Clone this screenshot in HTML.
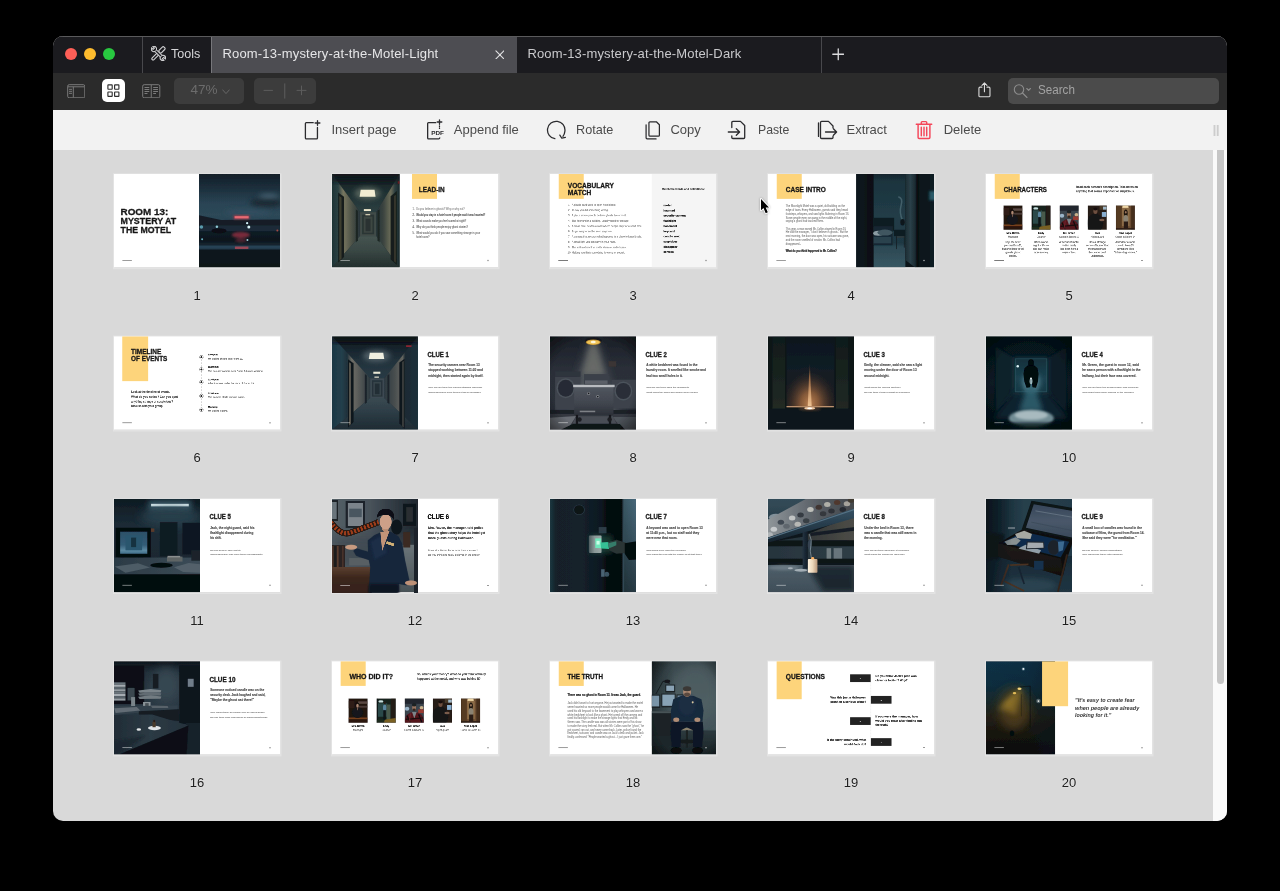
<!DOCTYPE html>
<html><head><meta charset="utf-8">
<style>
*{box-sizing:border-box;margin:0;padding:0}
html,body{width:1280px;height:891px;background:#000;overflow:hidden;font-family:"Liberation Sans",sans-serif}
#win{position:absolute;will-change:transform;left:53px;top:36px;width:1174px;height:784.7px;border-radius:10px;overflow:hidden;background:#d9d9d9}
#title{position:absolute;left:0;top:0;width:100%;height:37px;background:#1b1b1f;border-top:1px solid #5a5a5c}
#tool{position:absolute;left:0;top:36.5px;width:100%;height:37.2px;background:#2b2b2b}
#act{position:absolute;left:0;top:73.7px;width:100%;height:40.6px;background:#f2f2f2}
.abs{position:absolute}
.tl{position:absolute;top:12px;width:12px;height:12px;border-radius:50%}
.ttxt{position:absolute;top:10px;font-size:13px;line-height:16px;color:#d6d6d8;white-space:nowrap;transform-origin:0 50%}
.atxt{position:absolute;top:85.5px;font-size:13px;line-height:16px;color:#4b4b4b;white-space:nowrap;transform-origin:0 50%}
.lbl{position:absolute;width:60px;text-align:center;font-size:13px;line-height:16px;color:#202020;text-shadow:0 0 1.5px rgba(255,255,255,.7)}
.thumb{position:absolute;will-change:transform;overflow:hidden}
.slide{position:absolute;left:0;top:0;width:664px;height:373.6px;transform:scale(.25);transform-origin:0 0;color:#1a1a1a;font-family:"Liberation Sans",sans-serif}
.slide .img{position:absolute;top:0;height:373.6px;overflow:hidden}
.slide .img svg{display:block;width:100%;height:100%}
.yb{position:absolute;background:#fdd47c}
.h{position:absolute;font-weight:bold;white-space:nowrap;transform-origin:0 0;color:#151515;letter-spacing:.5px}
.t{position:absolute;white-space:nowrap;transform-origin:0 0}
.ft{position:absolute;left:34px;top:343px;font-size:6px;font-weight:bold;white-space:nowrap}
.pn{position:absolute;left:616px;top:342px;font-size:6px;white-space:nowrap;color:#444}
</style></head><body>
<div id="win">
 <div id="title"></div>
 <div id="tool"></div>
 <div id="act"></div>
  <!-- title bar -->
 <div class="tl" style="left:12px;background:#fe5f57"></div>
 <div class="tl" style="left:31px;background:#febc2e"></div>
 <div class="tl" style="left:49.8px;background:#28c840"></div>
 <div class="abs" style="left:89px;top:1px;width:1px;height:36px;background:#48484c"></div>
 <svg class="abs" style="left:98.3px;top:10.1px" width="14.800" height="14.800" viewBox="0 0 28 28" fill="#1b1b1f" stroke="#d2d2d4" stroke-width="2.100" stroke-linejoin="round" stroke-linecap="round">
  <g transform="rotate(-45 14 14)"><rect x="-2.500" y="11.700" width="16" height="4.600" rx="2.300"/><rect x="17" y="10.800" width="13" height="6.400" rx="2.400"/></g>
  <g transform="rotate(45 14 14)"><rect x="5" y="12" width="18" height="4"/><circle cx="2" cy="14" r="5"/><circle cx="26" cy="14" r="5"/><rect x="-5" y="12.300" width="6.500" height="3.400" stroke="none"/><rect x="26.500" y="12.300" width="6.500" height="3.400" stroke="none"/><path d="M-2.600 12.200 H1.600 V15.800 H-2.600 M30.600 12.200 H26.400 V15.800 H30.600" fill="none"/><rect x="6.500" y="13.100" width="15" height="1.800" stroke="none"/></g>
 </svg>
 <div class="ttxt" id="tx_tools" style="left:117.6px;transform:scaleX(.965)">Tools</div>
 <div class="abs" style="left:158px;top:1px;width:305.5px;height:36px;background:#4d4d52;border-left:1px solid #77777b"></div>
 <div class="ttxt" id="tx_tab1" style="left:169.4px;letter-spacing:.19px;color:#e6e6e8">Room-13-mystery-at-the-Motel-Light</div>
 <svg class="abs" style="left:441.700px;top:13.600px" width="9.800" height="9.800" viewBox="0 0 10.500 10.500" stroke="#e0e0e2" stroke-width="1.200" stroke-linecap="round"><path d="M1 1 L9.500 9.500 M9.500 1 L1 9.500"/></svg>
 <div class="ttxt" id="tx_tab2" style="left:474.4px;letter-spacing:.16px;color:#c9c9cc">Room-13-mystery-at-the-Motel-Dark</div>
 <div class="abs" style="left:768px;top:1px;width:1px;height:36px;background:#48484c"></div>
 <svg class="abs" style="left:778.5px;top:12.1px" width="12.500" height="12.500" viewBox="0 0 12.500 12.500" stroke="#dcdcde" stroke-width="1.300" stroke-linecap="round"><path d="M6.250 .8 V11.700 M.8 6.250 H11.700"/></svg>

 <!-- toolbar -->
 <svg class="abs" style="left:13.5px;top:47.6px" width="18.500" height="14.500" viewBox="0 0 18.500 14.500" fill="none" stroke="#7b7b7b" stroke-width="1"><rect x=".7" y=".7" width="17.100" height="13.100" rx="1.500"/><path d="M1 2.800 H17.500 M6.300 2.800 V13.500 M2 5.300 H5 M2 7.300 H5 M2 9.300 H5" /></svg>
 <div class="abs" style="left:48.8px;top:43.2px;width:23.200px;height:23.300px;border-radius:5px;background:#fff"></div>
 <svg class="abs" style="left:54.2px;top:48.200px" width="13" height="13.500" viewBox="0 0 13 13.500" fill="none" stroke="#2e2e2e" stroke-width="1.150"><rect x=".9" y=".9" width="4.300" height="4.300" rx=".4"/><rect x="7.600" y=".9" width="4.300" height="4.300" rx=".4"/><rect x=".9" y="8" width="4.300" height="4.300" rx=".4"/><rect x="7.600" y="8" width="4.300" height="4.300" rx=".4"/></svg>
 <svg class="abs" style="left:89.3px;top:47.6px" width="18.500" height="14.500" viewBox="0 0 18.500 14.500" fill="none" stroke="#7b7b7b" stroke-width="1"><rect x=".7" y=".7" width="17.100" height="13.100" rx="1.500"/><path d="M9.250 1 V13.500 M2.500 3.500 H7.300 M2.500 5.500 H7.300 M2.500 7.500 H7.300 M2.500 9.500 H5.500 M11.200 3.500 H16 M11.200 5.500 H16 M11.200 7.500 H16 M11.200 9.500 H14"/></svg>
 <div class="abs" style="left:121px;top:41.700px;width:69.800px;height:26.300px;border-radius:5px;background:#3c3c3c"></div>
 <div class="abs" id="tx_zoom" style="left:137.500px;top:46.300px;font-size:13.500px;line-height:16px;color:#6c6c6c;white-space:nowrap;transform-origin:0 50%">47%</div>
 <svg class="abs" style="left:169px;top:52.800px" width="8" height="6" viewBox="0 0 8 6" fill="none" stroke="#676767" stroke-width="1" stroke-linecap="round" stroke-linejoin="round"><path d="M.7 .9 L4 4.600 L7.300 .9"/></svg>
 <div class="abs" style="left:201.300px;top:41.700px;width:61.300px;height:26.300px;border-radius:5px;background:#3c3c3c"></div>
 <svg class="abs" style="left:208px;top:45px" width="50" height="20" viewBox="0 0 50 20" fill="none" stroke="#5c5c5c" stroke-width="1" stroke-linecap="round"><path d="M3 9.400 H11.500 M23.750 2.800 V17.200 M36 9.400 H45 M40.500 5 V13.800"/></svg>
 <svg class="abs" style="left:925.400px;top:46.300px" width="12.900" height="15.700" viewBox="0 0 14 17" fill="none" stroke="#dcdcdc" stroke-width="1.200" stroke-linecap="round" stroke-linejoin="round"><path d="M4.200 5.600 H2.200 Q1 5.600 1 6.800 V14.800 Q1 16 2.200 16 H11.800 Q13 16 13 14.800 V6.800 Q13 5.600 11.800 5.600 H9.800 M7 10.500 V1.200 M4.300 3.600 L7 1 L9.700 3.600"/></svg>
 <div class="abs" style="left:954.700px;top:41.700px;width:211.800px;height:26.300px;border-radius:5px;background:#4b4b4b"></div>
 <svg class="abs" style="left:960px;top:47px" width="20" height="16" viewBox="0 0 20 16" fill="none" stroke="#8c8c8c" stroke-width="1.100" stroke-linecap="round" stroke-linejoin="round"><circle cx="6" cy="6.500" r="4.700"/><path d="M9.500 10 L14 14.500 M13.800 5.500 L15.600 7.300 L17.400 5.500"/></svg>
 <div class="abs" id="tx_search" style="left:985px;top:46.200px;transform:scaleX(.97);font-size:12px;line-height:16px;color:#a3a3a3;white-space:nowrap;transform-origin:0 50%">Search</div>
 <!-- action bar -->

 <svg class="abs" style="left:250px;top:83px" width="20" height="22" viewBox="0 0 20 22" fill="none" stroke="#2b2b2e" stroke-width="1.300" stroke-linecap="round" stroke-linejoin="round"><path d="M10.200 3.650 H3.300 Q2.400 3.650 2.400 4.550 V18.950 Q2.400 19.850 3.300 19.850 H13.550 Q14.450 19.850 14.450 18.950 V8.400 M12.100 4 H16.900 M14.500 1.700 V6.300"/></svg>
 <div class="atxt" id="tx_a1" style="left:278.500px">Insert page</div>
 <svg class="abs" style="left:372px;top:83px" width="22" height="22" viewBox="0 0 22 22" fill="none" stroke="#2b2b2e" stroke-width="1.300" stroke-linecap="round" stroke-linejoin="round"><path d="M10.700 3.650 H3.550 Q2.650 3.650 2.650 4.550 V18.950 Q2.650 19.850 3.550 19.850 H13.700 Q14.600 19.850 14.750 19 M12.200 3 H16.800 M14.500 .8 V5.300 M14.500 7 V7.400 M14.500 9 V9.400"/><text x="6.300" y="16.200" font-family="Liberation Sans" font-weight="bold" font-size="6.200" fill="#2b2b2e" stroke="none" textLength="12.700" lengthAdjust="spacingAndGlyphs">PDF</text></svg>
 <div class="atxt" id="tx_a2" style="left:400.800px">Append file</div>
 <svg class="abs" style="left:492.400px;top:82.800px" width="23.300" height="23.300" viewBox="0 0 24 24" fill="none" stroke="#2b2b2e" stroke-width="1.300" stroke-linecap="round" stroke-linejoin="round"><path d="M10.200 20.300 A9 9 0 1 1 20.500 12.500 Q20.300 15.500 18.500 17.800 M15.300 16.600 L17.300 19.800 L21 19"/></svg>
 <div class="atxt" id="tx_a3" style="transform:scaleX(.974);left:523.400px">Rotate</div>
 <svg class="abs" style="left:590.500px;top:83.700px" width="19" height="20.900" viewBox="0 0 20 22" fill="none" stroke="#2b2b2e" stroke-width="1.300" stroke-linecap="round" stroke-linejoin="round"><path d="M6.300 1.900 H13 L16.200 5 V16 Q16.200 17.100 15.100 17.100 H6.300 Q5.200 17.100 5.200 16 V3 Q5.200 1.900 6.300 1.900 Z M2.200 5 V18.800 Q2.200 19.900 3.300 19.900 H12.700"/></svg>
 <div class="atxt" id="tx_a4" style="left:617.400px">Copy</div>
 <svg class="abs" style="left:673px;top:83px" width="22" height="22" viewBox="0 0 22 22" fill="none" stroke="#2b2b2e" stroke-width="1.300" stroke-linecap="round" stroke-linejoin="round"><path d="M5.800 8.500 V3.500 Q5.800 2.400 6.900 2.400 H14.500 L18.700 6.500 V18.400 Q18.700 19.500 17.600 19.500 H6.900 Q5.800 19.500 5.800 18.400 V17 M2.300 13 H13.500 M10.300 9.800 L13.600 13 L10.300 16.200"/></svg>
 <div class="atxt" id="tx_a5" style="transform:scaleX(.943);left:704.500px">Paste</div>
 <svg class="abs" style="left:763px;top:83px" width="24" height="22" viewBox="0 0 24 22" fill="none" stroke="#2b2b2e" stroke-width="1.300" stroke-linecap="round" stroke-linejoin="round"><path d="M2.500 4 V17.400 M17 8.800 V7 L12.500 2.400 H5.600 Q4.500 2.400 4.500 3.500 V18.400 Q4.500 19.500 5.600 19.500 H15.900 Q17 19.500 17 18.400 V17.200 M9.500 13 H20.300 M17.400 9.800 L20.600 13 L17.400 16.200"/></svg>
 <div class="atxt" id="tx_a6" style="left:793.500px">Extract</div>
 <svg class="abs" style="left:861px;top:83px" width="20" height="22" viewBox="0 0 20 22" fill="none" stroke="#f4465a" stroke-width="1.450" stroke-linecap="round" stroke-linejoin="round"><path d="M2.300 5.300 H17.700 M7.300 5 V3.400 Q7.300 2.600 8.100 2.600 H11.900 Q12.700 2.600 12.700 3.400 V5 M4.100 5.500 V18.500 Q4.100 19.500 5.100 19.500 H14.900 Q15.900 19.500 15.900 18.500 V5.500 M7.300 8.200 V16.800 M10 8.200 V16.800 M12.700 8.200 V16.800"/></svg>
 <div class="atxt" id="tx_a7" style="left:890.700px">Delete</div>
 <svg class="abs" style="left:1158.500px;top:88px" width="9" height="14" viewBox="0 0 9 14" stroke="#cdcdcd" stroke-width="1.900" fill="none"><path d="M2.500 1 V12 M5.700 1 V12"/></svg>
 <!-- scrollbar -->
 <div class="abs" style="left:1159.800px;top:114.300px;width:15px;height:672px;background:#fafafa"></div>
 <div class="abs" style="left:1164.200px;top:114.300px;width:6.900px;height:533.500px;border-radius:0 0 3.500px 3.500px;background:#c6c6c6"></div>

 <svg width="0" height="0" style="position:absolute"><defs>
<filter id="bg1" x="0" y="0" width="100%" height="100%"><feGaussianBlur stdDeviation="1.3" edgeMode="duplicate"/></filter>
<filter id="b1" x="-20%" y="-20%" width="140%" height="140%"><feGaussianBlur stdDeviation="1.2"/></filter>
<filter id="b2" x="-20%" y="-20%" width="140%" height="140%"><feGaussianBlur stdDeviation="2.5"/></filter>
<filter id="b4" x="-30%" y="-30%" width="160%" height="160%"><feGaussianBlur stdDeviation="5"/></filter>
<filter id="b8" x="-40%" y="-40%" width="180%" height="180%"><feGaussianBlur stdDeviation="10"/></filter>
<filter id="b16" x="-60%" y="-60%" width="220%" height="220%"><feGaussianBlur stdDeviation="20"/></filter>
<linearGradient id="g1" x1="0" y1="0" x2="0" y2="1" gradientUnits="objectBoundingBox"><stop offset="0" stop-color="#131f29"/><stop offset="0.3" stop-color="#1c2f3c"/><stop offset="0.6" stop-color="#294353"/><stop offset="0.85" stop-color="#2d4858"/><stop offset="1" stop-color="#2a4454"/></linearGradient><linearGradient id="g2" x1="0" y1="0" x2="0" y2="1" gradientUnits="objectBoundingBox"><stop offset="0" stop-color="#101c24"/><stop offset="0.25" stop-color="#0c161d"/><stop offset="0.36" stop-color="#15242f"/><stop offset="0.42" stop-color="#294659"/><stop offset="0.47" stop-color="#213a4b"/><stop offset="0.52" stop-color="#0d171e"/><stop offset="1" stop-color="#0a1218"/></linearGradient><linearGradient id="g3" x1="0" y1="0" x2="0" y2="1" gradientUnits="objectBoundingBox"><stop offset="0" stop-color="#131e1f"/><stop offset="0.45" stop-color="#1e2f31"/><stop offset="1" stop-color="#2c3f41"/></linearGradient><linearGradient id="g4" x1="0" y1="0" x2="1" y2="0" gradientUnits="objectBoundingBox"><stop offset="0" stop-color="#1d3335"/><stop offset="0.22" stop-color="#2a4042"/><stop offset="0.4" stop-color="#77765f"/><stop offset="0.75" stop-color="#474d44"/><stop offset="1" stop-color="#28343a"/></linearGradient><linearGradient id="g5" x1="0" y1="0" x2="1" y2="0" gradientUnits="objectBoundingBox"><stop offset="0" stop-color="#27333a"/><stop offset="0.3" stop-color="#3a433f"/><stop offset="0.62" stop-color="#6b6c58"/><stop offset="0.8" stop-color="#2b3d3e"/><stop offset="1" stop-color="#1a2a2b"/></linearGradient><linearGradient id="g6" x1="0" y1="0" x2="0" y2="1" gradientUnits="objectBoundingBox"><stop offset="0" stop-color="#465451"/><stop offset="0.5" stop-color="#384643"/><stop offset="1" stop-color="#222e2d"/></linearGradient><linearGradient id="g7" x1="0" y1="0" x2="1" y2="0" gradientUnits="objectBoundingBox"><stop offset="0" stop-color="#0d191f"/><stop offset="0.45" stop-color="#0b151a"/><stop offset="0.8" stop-color="#070d11"/><stop offset="1" stop-color="#0a1318"/></linearGradient><linearGradient id="g8" x1="0" y1="0" x2="0" y2="1" gradientUnits="objectBoundingBox"><stop offset="0" stop-color="#13262e"/><stop offset="0.08" stop-color="#1c343e"/><stop offset="0.45" stop-color="#213c47"/><stop offset="0.74" stop-color="#1f3843"/><stop offset="0.78" stop-color="#2c4853"/><stop offset="1" stop-color="#385762"/></linearGradient><linearGradient id="g9" x1="0" y1="0" x2="1" y2="0" gradientUnits="objectBoundingBox"><stop offset="0" stop-color="#1c2d34"/><stop offset="0.45" stop-color="#2b4049"/><stop offset="0.8" stop-color="#1d2e35"/><stop offset="1" stop-color="#131f25"/></linearGradient><linearGradient id="g10" x1="0" y1="0" x2="1" y2="0" gradientUnits="objectBoundingBox"><stop offset="0" stop-color="#0b1519"/><stop offset="0.6" stop-color="#0c181d"/><stop offset="1" stop-color="#0d1c25"/></linearGradient><linearGradient id="g11" x1="0" y1="0" x2="0" y2="1" gradientUnits="objectBoundingBox"><stop offset="0" stop-color="#0d161c"/><stop offset="0.3" stop-color="#17242d"/><stop offset="0.6" stop-color="#22323c"/><stop offset="1" stop-color="#283a45"/></linearGradient><linearGradient id="g12" x1="0" y1="0" x2="1" y2="0" gradientUnits="objectBoundingBox"><stop offset="0" stop-color="#1d3743"/><stop offset="0.25" stop-color="#223f4c"/><stop offset="0.4" stop-color="#1f313b"/><stop offset="0.52" stop-color="#6e6d66"/><stop offset="0.8" stop-color="#4a4f50"/><stop offset="1" stop-color="#2b373f"/></linearGradient><linearGradient id="g13" x1="0" y1="0" x2="1" y2="0" gradientUnits="objectBoundingBox"><stop offset="0" stop-color="#2c3840"/><stop offset="0.3" stop-color="#474d4e"/><stop offset="0.54" stop-color="#65655f"/><stop offset="0.62" stop-color="#1c2a33"/><stop offset="1" stop-color="#1e303a"/></linearGradient><linearGradient id="g14" x1="0" y1="0" x2="0" y2="1" gradientUnits="objectBoundingBox"><stop offset="0" stop-color="#3a4a52"/><stop offset="0.4" stop-color="#2e3e47"/><stop offset="1" stop-color="#1e2b33"/></linearGradient><linearGradient id="g15" x1="0" y1="0" x2="0" y2="1" gradientUnits="objectBoundingBox"><stop offset="0" stop-color="#1a1f27"/><stop offset="0.35" stop-color="#2a2f38"/><stop offset="0.8" stop-color="#2b3039"/><stop offset="1" stop-color="#22262d"/></linearGradient><linearGradient id="g16" x1="0" y1="0" x2="0" y2="1" gradientUnits="objectBoundingBox"><stop offset="0" stop-color="#353941"/><stop offset="1" stop-color="#2c3037"/></linearGradient><linearGradient id="g17" x1="0" y1="0" x2="0" y2="1" gradientUnits="objectBoundingBox"><stop offset="0" stop-color="#51565f"/><stop offset="0.6" stop-color="#40454e"/><stop offset="1" stop-color="#2c3038"/></linearGradient><radialGradient id="g18" cx="0.5" cy="0.5" r="0.75" gradientUnits="objectBoundingBox"><stop offset="0" stop-color="#000" stop-opacity="0"/><stop offset="0.65" stop-color="#000" stop-opacity="0"/><stop offset="1" stop-color="#000" stop-opacity="0.6"/></radialGradient><linearGradient id="g19" x1="0" y1="0" x2="0" y2="1" gradientUnits="objectBoundingBox"><stop offset="0" stop-color="#101b1d"/><stop offset="0.5" stop-color="#18231f"/><stop offset="1" stop-color="#232a24"/></linearGradient><linearGradient id="g20" x1="0" y1="0" x2="0" y2="1" gradientUnits="objectBoundingBox"><stop offset="0" stop-color="#0f1a1c"/><stop offset="0.5" stop-color="#18231f"/><stop offset="1" stop-color="#222923"/></linearGradient><linearGradient id="g21" x1="0" y1="0" x2="0" y2="1" gradientUnits="objectBoundingBox"><stop offset="0" stop-color="#0c161e"/><stop offset="0.45" stop-color="#111c25"/><stop offset="1" stop-color="#1f1d1d"/></linearGradient><radialGradient id="g22" cx="0.5" cy="0.5" r="0.5" gradientUnits="objectBoundingBox"><stop offset="0" stop-color="#c48654" stop-opacity="0.95"/><stop offset="0.3" stop-color="#9c663e" stop-opacity="0.8"/><stop offset="0.6" stop-color="#5e4030" stop-opacity="0.5"/><stop offset="0.85" stop-color="#2a2424" stop-opacity="0.2"/><stop offset="1" stop-color="#1a1a1c" stop-opacity="0"/></radialGradient><linearGradient id="g23" x1="0" y1="0" x2="0" y2="1" gradientUnits="objectBoundingBox"><stop offset="0" stop-color="#a87044" stop-opacity="0.0"/><stop offset="0.3" stop-color="#b87c4c" stop-opacity="0.7"/><stop offset="1" stop-color="#f0c494" stop-opacity="1"/></linearGradient><linearGradient id="g24" x1="0" y1="0" x2="0" y2="1" gradientUnits="objectBoundingBox"><stop offset="0" stop-color="#0d171c"/><stop offset="0.1" stop-color="#0b151b"/><stop offset="1" stop-color="#0c1820"/></linearGradient><linearGradient id="g25" x1="0" y1="0" x2="0" y2="1" gradientUnits="objectBoundingBox"><stop offset="0" stop-color="#061219"/><stop offset="0.5" stop-color="#081a23"/><stop offset="1" stop-color="#050e14"/></linearGradient><linearGradient id="g26" x1="0" y1="0" x2="0" y2="1" gradientUnits="objectBoundingBox"><stop offset="0" stop-color="#12303b"/><stop offset="0.6" stop-color="#1b4250"/><stop offset="1" stop-color="#163844"/></linearGradient><radialGradient id="g27" cx="0.5" cy="0.55" r="0.75" gradientUnits="objectBoundingBox"><stop offset="0" stop-color="#000" stop-opacity="0"/><stop offset="0.6" stop-color="#000" stop-opacity="0"/><stop offset="1" stop-color="#000" stop-opacity="0.6"/></radialGradient><linearGradient id="g28" x1="0" y1="0" x2="0" y2="1" gradientUnits="objectBoundingBox"><stop offset="0" stop-color="#0e1a22"/><stop offset="0.3" stop-color="#1c2c37"/><stop offset="0.62" stop-color="#1a2832"/><stop offset="1" stop-color="#0c141a"/></linearGradient><linearGradient id="g29" x1="0" y1="0" x2="0" y2="1" gradientUnits="objectBoundingBox"><stop offset="0" stop-color="#2c5068"/><stop offset="0.6" stop-color="#335c76"/><stop offset="0.85" stop-color="#5c8aa2"/><stop offset="1" stop-color="#3f6e88"/></linearGradient><linearGradient id="g30" x1="0" y1="0" x2="1" y2="0" gradientUnits="objectBoundingBox"><stop offset="0" stop-color="#2b3a45"/><stop offset="1" stop-color="#3c4c57"/></linearGradient><linearGradient id="g31" x1="0" y1="0" x2="1" y2="0" gradientUnits="objectBoundingBox"><stop offset="0" stop-color="#545f66"/><stop offset="0.45" stop-color="#48525a"/><stop offset="0.75" stop-color="#2f3840"/><stop offset="1" stop-color="#20282f"/></linearGradient><linearGradient id="g32" x1="0" y1="0" x2="0" y2="1" gradientUnits="objectBoundingBox"><stop offset="0" stop-color="#6b7579"/><stop offset="1" stop-color="#4a5358"/></linearGradient><linearGradient id="g33" x1="0" y1="0" x2="0" y2="1" gradientUnits="objectBoundingBox"><stop offset="0" stop-color="#5c4031"/><stop offset="0.12" stop-color="#3b261d"/><stop offset="1" stop-color="#21161a"/></linearGradient><linearGradient id="g34" x1="0" y1="0" x2="1" y2="0" gradientUnits="objectBoundingBox"><stop offset="0" stop-color="#1c3640"/><stop offset="0.07" stop-color="#132029"/><stop offset="0.3" stop-color="#101c25"/><stop offset="0.6" stop-color="#0e1820"/><stop offset="0.66" stop-color="#05090d"/><stop offset="0.83" stop-color="#04070a"/><stop offset="0.86" stop-color="#3a5864"/><stop offset="1" stop-color="#48687a"/></linearGradient><linearGradient id="g35" x1="0" y1="0" x2="0" y2="1" gradientUnits="objectBoundingBox"><stop offset="0" stop-color="#000" stop-opacity="0"/><stop offset="1" stop-color="#000" stop-opacity="0.45"/></linearGradient><linearGradient id="g36" x1="0" y1="0" x2="1" y2="0" gradientUnits="objectBoundingBox"><stop offset="0" stop-color="#15232d" stop-opacity="0"/><stop offset="0.5" stop-color="#15232d" stop-opacity="0.8"/><stop offset="1" stop-color="#15232d" stop-opacity="0"/></linearGradient><linearGradient id="g37" x1="0" y1="0" x2="1" y2="0" gradientUnits="objectBoundingBox"><stop offset="0" stop-color="#4f5e60"/><stop offset="0.45" stop-color="#8a9898"/><stop offset="1" stop-color="#9aa8a6"/></linearGradient><linearGradient id="g38" x1="0" y1="0" x2="0" y2="1" gradientUnits="objectBoundingBox"><stop offset="0" stop-color="#3b5563"/><stop offset="1" stop-color="#2d4452"/></linearGradient><linearGradient id="g39" x1="0" y1="0" x2="1" y2="0" gradientUnits="objectBoundingBox"><stop offset="0" stop-color="#3a3d3e"/><stop offset="1" stop-color="#57564f"/></linearGradient><linearGradient id="g40" x1="0" y1="0" x2="1" y2="0" gradientUnits="objectBoundingBox"><stop offset="0" stop-color="#2c3a44"/><stop offset="1" stop-color="#34434d"/></linearGradient><linearGradient id="g41" x1="0" y1="0" x2="0" y2="1" gradientUnits="objectBoundingBox"><stop offset="0" stop-color="#0b1217"/><stop offset="1" stop-color="#131c22"/></linearGradient><linearGradient id="g42" x1="0" y1="0" x2="0" y2="1" gradientUnits="objectBoundingBox"><stop offset="0" stop-color="#5a6b77"/><stop offset="0.3" stop-color="#465662"/><stop offset="0.7" stop-color="#27333c"/><stop offset="1" stop-color="#161f26"/></linearGradient><linearGradient id="g43" x1="0" y1="0" x2="1" y2="0" gradientUnits="objectBoundingBox"><stop offset="0" stop-color="#a4aaae"/><stop offset="0.3" stop-color="#80878e"/><stop offset="0.6" stop-color="#62676e"/><stop offset="1" stop-color="#4c4f54"/></linearGradient><linearGradient id="g44" x1="0" y1="0" x2="0" y2="1" gradientUnits="objectBoundingBox"><stop offset="0" stop-color="#3f5d71"/><stop offset="0.5" stop-color="#2b4254"/><stop offset="1" stop-color="#16242f"/></linearGradient><linearGradient id="g45" x1="0" y1="0" x2="1" y2="0" gradientUnits="objectBoundingBox"><stop offset="0" stop-color="#27394a"/><stop offset="1" stop-color="#131e28"/></linearGradient><linearGradient id="g46" x1="0" y1="0" x2="1" y2="0" gradientUnits="objectBoundingBox"><stop offset="0" stop-color="#fff3e0"/><stop offset="0.5" stop-color="#ecd7ba"/><stop offset="1" stop-color="#b9977a"/></linearGradient><linearGradient id="g47" x1="0" y1="0" x2="1" y2="0" gradientUnits="objectBoundingBox"><stop offset="0" stop-color="#10242f"/><stop offset="0.45" stop-color="#2f4c5b"/><stop offset="1" stop-color="#2c4656"/></linearGradient><linearGradient id="g48" x1="0" y1="0" x2="0" y2="1" gradientUnits="objectBoundingBox"><stop offset="0" stop-color="#1d323f"/><stop offset="0.5" stop-color="#2a4252"/><stop offset="1" stop-color="#1c2f3b"/></linearGradient><linearGradient id="g49" x1="0" y1="0" x2="0" y2="1" gradientUnits="objectBoundingBox"><stop offset="0" stop-color="#43536a"/><stop offset="0.5" stop-color="#5b6b80"/><stop offset="1" stop-color="#48586c"/></linearGradient><linearGradient id="g50" x1="0" y1="0" x2="0" y2="1" gradientUnits="objectBoundingBox"><stop offset="0" stop-color="#2a201a"/><stop offset="1" stop-color="#14100e"/></linearGradient><linearGradient id="g51" x1="0" y1="0" x2="1" y2="0" gradientUnits="objectBoundingBox"><stop offset="0" stop-color="#06121a" stop-opacity="0.75"/><stop offset="0.3" stop-color="#06121a" stop-opacity="0"/></linearGradient><linearGradient id="g52" x1="0" y1="0" x2="0" y2="1" gradientUnits="objectBoundingBox"><stop offset="0" stop-color="#0c141b"/><stop offset="0.12" stop-color="#222f39"/><stop offset="0.5" stop-color="#2b3944"/><stop offset="1" stop-color="#182129"/></linearGradient><linearGradient id="g53" x1="0" y1="0" x2="1" y2="0" gradientUnits="objectBoundingBox"><stop offset="0" stop-color="#202c36"/><stop offset="0.5" stop-color="#2c3a44"/><stop offset="1" stop-color="#25323c"/></linearGradient><linearGradient id="g54" x1="0" y1="0" x2="0" y2="1" gradientUnits="objectBoundingBox"><stop offset="0" stop-color="#38464b"/><stop offset="0.45" stop-color="#485a5f"/><stop offset="0.73" stop-color="#44555a"/><stop offset="0.75" stop-color="#2c393d"/><stop offset="1" stop-color="#1a2427"/></linearGradient><linearGradient id="g55" x1="0" y1="0" x2="1" y2="0" gradientUnits="objectBoundingBox"><stop offset="0" stop-color="#10181b" stop-opacity="0.6"/><stop offset="0.35" stop-color="#10181b" stop-opacity="0"/></linearGradient><radialGradient id="g56" cx="0.55" cy="0.5" r="0.8" gradientUnits="objectBoundingBox"><stop offset="0" stop-color="#000" stop-opacity="0"/><stop offset="0.65" stop-color="#000" stop-opacity="0"/><stop offset="1" stop-color="#000" stop-opacity="0.5"/></radialGradient><linearGradient id="g57" x1="0" y1="0" x2="0" y2="1" gradientUnits="objectBoundingBox"><stop offset="0" stop-color="#0b3147"/><stop offset="0.25" stop-color="#0d2d3e"/><stop offset="0.42" stop-color="#17292c"/><stop offset="0.6" stop-color="#231f15"/><stop offset="0.8" stop-color="#15130e"/><stop offset="1" stop-color="#090b0c"/></linearGradient><linearGradient id="g58" x1="0" y1="0" x2="1" y2="0" gradientUnits="objectBoundingBox"><stop offset="0" stop-color="#03141e" stop-opacity="0"/><stop offset="0.6" stop-color="#03141e" stop-opacity="0.1"/><stop offset="1" stop-color="#03141e" stop-opacity="0.5"/></linearGradient></defs></svg>
<svg class="thumb" style="left:59px;top:136px" width="170" height="99" viewBox="-8 -8.00 680 396" font-family="Liberation Sans"><rect x="-1" y="0" width="668" height="378" fill="none" stroke="#fff" stroke-width="6" opacity=".26" filter="url(#b1)"/><svg x="0" y="0" width="664" height="373.6" viewBox="0 0 664 373.6" overflow="hidden"><rect width="664" height="373.6" fill="#fff"/><svg x="340" y="0" width="324" height="373.6" viewBox="0 0 324 373.6" overflow="hidden"><rect width="324" height="373.6" fill="#0a1218"/><g filter="url(#bg1)"><rect x="0.0" y="0.0" width="324.0" height="190.0" fill="url(#g1)" /><g filter="url(#b8)" ><ellipse cx="268.5" cy="114.5" rx="66.0" ry="20.0" fill="#1a2a36" /><ellipse cx="279.7" cy="86.4" rx="40.0" ry="5.0" fill="#58788a" /><ellipse cx="195.3" cy="152.8" rx="90.0" ry="12.0" fill="#325060" /></g><polygon points="-0.4,165.2 88.5,183.7 324.7,182.0 324.7,237.2 -0.4,237.2" fill="#121e28" /><g filter="url(#b2)" ><rect x="-0.4" y="206.2" width="324.0" height="22.0" fill="#1a2c38" /></g><rect x="0.0" y="231.0" width="324.0" height="143.0" fill="url(#g2)" /><g filter="url(#b4)" ><ellipse cx="167.2" cy="243.9" rx="36.0" ry="12.0" fill="#8a3040" opacity=".85"/><ellipse cx="167.2" cy="265.3" rx="24.0" ry="8.0" fill="#5a2432" opacity=".8"/></g><g filter="url(#b2)" ><rect x="143.6" y="290.1" width="54.0" height="10.0" fill="#c04a58" opacity=".75"/></g><g filter="url(#b4)" ><rect x="139.1" y="165.2" width="62.0" height="16.0" fill="#c03848" opacity=".8"/></g><g filter="url(#b1)" ><rect x="142.5" y="168.5" width="56.0" height="9.0" fill="#f07078" opacity=".9"/></g><g filter="url(#b2)" ><ellipse cx="192.5" cy="196.7" rx="4.5" ry="4.5" fill="#cfeef5" /><ellipse cx="199.3" cy="211.9" rx="6.0" ry="6.0" fill="#d8f4f8" /><ellipse cx="71.6" cy="210.7" rx="5.0" ry="5.0" fill="#8ec8d4" /><ellipse cx="9.7" cy="211.9" rx="7.0" ry="7.0" fill="#5a9aac" /><ellipse cx="12.5" cy="260.8" rx="4.0" ry="4.0" fill="#6ab0c0" /><ellipse cx="193.7" cy="263.6" rx="4.0" ry="4.0" fill="#9fd0da" /><ellipse cx="313.5" cy="225.9" rx="4.0" ry="4.0" fill="#a04a40" /></g><g filter="url(#b2)" ><ellipse cx="80.0" cy="227.0" rx="30.0" ry="10.0" fill="#080e13" /></g></g></svg><text stroke="#161616" stroke-width="1.1" stroke-linejoin="round" x="26.2" y="163.0" font-size="36" font-weight="bold" fill="#161616" text-anchor="start" textLength="191.0" lengthAdjust="spacingAndGlyphs">ROOM 13:</text><text stroke="#161616" stroke-width="1.1" stroke-linejoin="round" x="26.2" y="199.5" font-size="36" font-weight="bold" fill="#161616" text-anchor="start" textLength="223.0" lengthAdjust="spacingAndGlyphs">MYSTERY AT</text><text stroke="#161616" stroke-width="1.1" stroke-linejoin="round" x="26.2" y="236.0" font-size="36" font-weight="bold" fill="#161616" text-anchor="start" textLength="202.5" lengthAdjust="spacingAndGlyphs">THE MOTEL</text><rect x="33.5" y="344.3" width="38" height="3" fill="#222" opacity=".6"/></svg></svg>
<div class="lbl" style="left:114px;top:251.9px">1</div>
<svg class="thumb" style="left:277px;top:136px" width="170" height="99" viewBox="-8 -8.00 680 396" font-family="Liberation Sans"><rect x="-1" y="0" width="668" height="378" fill="none" stroke="#fff" stroke-width="6" opacity=".26" filter="url(#b1)"/><svg x="0" y="0" width="664" height="373.6" viewBox="0 0 664 373.6" overflow="hidden"><rect width="664" height="373.6" fill="#fff"/><svg x="0" y="0" width="271" height="373.6" viewBox="0 0 271 373.6" overflow="hidden"><rect width="271" height="373.6" fill="#1f2c2c"/><g filter="url(#bg1)"><polygon points="0.0,0.0 271.0,0.0 176.4,152.8 112.3,152.8" fill="url(#g3)" /><polygon points="0.0,0.0 112.3,152.8 112.3,248.4 0.0,373.6" fill="url(#g4)" /><polygon points="271.0,0.0 176.4,152.8 176.4,248.4 271.0,373.6" fill="url(#g5)" /><polygon points="0.0,373.6 112.3,248.4 176.4,248.4 271.0,373.6" fill="url(#g6)" /><rect x="112.3" y="152.8" width="64.1" height="95.6" fill="#2f3a38" /><rect x="112.3" y="152.8" width="64.1" height="95.6" fill="#414c48" /><rect x="120.3" y="162.4" width="48.1" height="78.8" fill="#2c3634" /><rect x="127.3" y="170.8" width="34.1" height="64.1" fill="#3d4743" /><rect x="134.3" y="179.2" width="20.1" height="49.4" fill="#2a3331" /><polygon points="24.5,74.0 48.1,90.9 48.1,331.7 24.5,355.3" fill="#161f1d" /><polygon points="29.0,88.1 38.0,94.3 38.0,338.4 29.0,346.9" fill="#3e3d2f" /><polygon points="234.4,88.6 259.7,68.4 259.7,364.3 234.4,341.8" fill="#161f1d" /><polygon points="248.4,88.1 255.2,83.0 255.2,355.3 248.4,348.6" fill="#38382c" /><polygon points="95.4,141.5 103.8,147.2 103.8,265.3 95.4,273.7" fill="#1c2624" /><polygon points="182.0,147.2 190.5,141.5 190.5,273.7 182.0,265.3" fill="#1c2624" /><g filter="url(#b8)" ><rect x="0.0" y="0.0" width="271.0" height="30.0" fill="#0f191a" /></g><g filter="url(#b8)" ><ellipse cx="142.4" cy="76.8" rx="52.0" ry="24.0" fill="#8f9a88" opacity=".5"/></g><polygon points="114.6,62.8 170.2,62.8 174.2,90.9 110.6,90.9" fill="#f2ecd2" /><rect x="127.5" y="140.4" width="28.1" height="7.9" fill="#efe8cc" /><rect x="133.7" y="160.1" width="19.1" height="5.1" fill="#cfc9b0" /><rect x="263.0" y="29.0" width="8.0" height="10.0" fill="#6a1a22" /></g></svg><rect x="320" y="0" width="100" height="99.5" fill="#fdd47b"/><text stroke="#161616" stroke-width="1.1" stroke-linejoin="round" x="347.0" y="71.2" font-size="28" font-weight="bold" fill="#161616" text-anchor="start" textLength="104.0" lengthAdjust="spacingAndGlyphs">LEAD-IN</text><text x="321.5" y="144.8" font-size="10.6" font-weight="normal" fill="#222" text-anchor="start" opacity="0.55" stroke="#222" stroke-width="0.26">1.</text><text x="336.7" y="144.8" font-size="10.6" font-weight="normal" fill="#222" text-anchor="start" textLength="194.0" lengthAdjust="spacingAndGlyphs" opacity="0.55" stroke="#222" stroke-width="0.26">Do you believe in ghosts? Why or why not?</text><text x="321.5" y="168.8" font-size="10.6" font-weight="normal" fill="#222" text-anchor="start" opacity="0.95" stroke="#222" stroke-width="0.26">2.</text><text x="336.7" y="168.8" font-size="10.6" font-weight="normal" fill="#222" text-anchor="start" textLength="276.0" lengthAdjust="spacingAndGlyphs" opacity="0.95" stroke="#222" stroke-width="0.26">Would you stay in a hotel room if people said it was haunted?</text><text x="321.5" y="191.8" font-size="10.6" font-weight="normal" fill="#222" text-anchor="start" opacity="0.75" stroke="#222" stroke-width="0.26">3.</text><text x="336.7" y="191.8" font-size="10.6" font-weight="normal" fill="#222" text-anchor="start" textLength="200.0" lengthAdjust="spacingAndGlyphs" opacity="0.75" stroke="#222" stroke-width="0.26">What sounds make you feel scared at night?</text><text x="321.5" y="216.3" font-size="10.6" font-weight="normal" fill="#222" text-anchor="start" opacity="0.75" stroke="#222" stroke-width="0.26">4.</text><text x="336.7" y="216.3" font-size="10.6" font-weight="normal" fill="#222" text-anchor="start" textLength="207.0" lengthAdjust="spacingAndGlyphs" opacity="0.75" stroke="#222" stroke-width="0.26">Why do you think people enjoy ghost stories?</text><text x="321.5" y="239.4" font-size="10.6" font-weight="normal" fill="#222" text-anchor="start" opacity="0.7" stroke="#222" stroke-width="0.26">5.</text><text x="336.7" y="239.4" font-size="10.6" font-weight="normal" fill="#222" text-anchor="start" textLength="256.0" lengthAdjust="spacingAndGlyphs" opacity="0.7" stroke="#222" stroke-width="0.26">What would you do if you saw something strange in your</text><text x="336.7" y="254.6" font-size="10.6" font-weight="normal" fill="#222" text-anchor="start" textLength="53.0" lengthAdjust="spacingAndGlyphs" opacity="0.7" stroke="#222" stroke-width="0.26">hotel room?</text><rect x="33.5" y="344.3" width="38" height="3" fill="#fff" opacity=".6"/><rect x="621" y="343.5" width="6" height="5" fill="#555" opacity=".6"/></svg></svg>
<div class="lbl" style="left:332px;top:251.9px">2</div>
<svg class="thumb" style="left:495px;top:136px" width="170" height="99" viewBox="-8 -8.00 680 396" font-family="Liberation Sans"><rect x="-1" y="0" width="668" height="378" fill="none" stroke="#fff" stroke-width="6" opacity=".26" filter="url(#b1)"/><svg x="0" y="0" width="664" height="373.6" viewBox="0 0 664 373.6" overflow="hidden"><rect width="664" height="373.6" fill="#fff"/><rect x="407" y="0" width="257" height="373.6" fill="#f5f5f5"/><rect x="35" y="0" width="100" height="99.5" fill="#fdd47b"/><text stroke="#161616" stroke-width="1.1" stroke-linejoin="round" x="71.2" y="57.1" font-size="27.5" font-weight="bold" fill="#161616" text-anchor="start" textLength="184.0" lengthAdjust="spacingAndGlyphs">VOCABULARY</text><text stroke="#161616" stroke-width="1.1" stroke-linejoin="round" x="71.2" y="84.1" font-size="27.5" font-weight="bold" fill="#161616" text-anchor="start" textLength="94.0" lengthAdjust="spacingAndGlyphs">MATCH</text><text x="72.3" y="126.9" font-size="11.2" font-weight="normal" fill="#333" text-anchor="start" opacity="0.6" stroke="#333" stroke-width="0.38">1.</text><text x="87.0" y="126.9" font-size="11.2" font-weight="normal" fill="#333" text-anchor="start" textLength="178.0" lengthAdjust="spacingAndGlyphs" opacity="0.62" stroke="#333" stroke-width="0.38">A plastic card used to open hotel doors.</text><text x="72.3" y="148.1" font-size="11.2" font-weight="normal" fill="#333" text-anchor="start" opacity="0.6" stroke="#333" stroke-width="0.38">2.</text><text x="87.0" y="148.1" font-size="11.2" font-weight="normal" fill="#333" text-anchor="start" textLength="147.0" lengthAdjust="spacingAndGlyphs" opacity="0.62" stroke="#333" stroke-width="0.38">To say you did something wrong.</text><text x="72.3" y="169.3" font-size="11.2" font-weight="normal" fill="#333" text-anchor="start" opacity="0.6" stroke="#333" stroke-width="0.38">3.</text><text x="87.0" y="169.3" font-size="11.2" font-weight="normal" fill="#333" text-anchor="start" textLength="219.0" lengthAdjust="spacingAndGlyphs" opacity="0.62" stroke="#333" stroke-width="0.38">A place where people believe ghosts live or visit.</text><text x="72.3" y="190.5" font-size="11.2" font-weight="normal" fill="#333" text-anchor="start" opacity="0.6" stroke="#333" stroke-width="0.38">4.</text><text x="87.0" y="190.5" font-size="11.2" font-weight="normal" fill="#333" text-anchor="start" textLength="230.0" lengthAdjust="spacingAndGlyphs" opacity="0.62" stroke="#333" stroke-width="0.38">The floor under a building, usually used for storage.</text><text x="72.3" y="211.7" font-size="11.2" font-weight="normal" fill="#333" text-anchor="start" opacity="0.6" stroke="#333" stroke-width="0.38">5.</text><text x="87.0" y="211.7" font-size="11.2" font-weight="normal" fill="#333" text-anchor="start" textLength="282.0" lengthAdjust="spacingAndGlyphs" opacity="0.62" stroke="#333" stroke-width="0.38">A small hotel next to a road where people stay for a short time.</text><text x="72.3" y="232.9" font-size="11.2" font-weight="normal" fill="#333" text-anchor="start" opacity="0.6" stroke="#333" stroke-width="0.38">6.</text><text x="87.0" y="232.9" font-size="11.2" font-weight="normal" fill="#333" text-anchor="start" textLength="163.0" lengthAdjust="spacingAndGlyphs" opacity="0.62" stroke="#333" stroke-width="0.38">To go away or not be seen anymore.</text><text x="72.3" y="254.1" font-size="11.2" font-weight="normal" fill="#333" text-anchor="start" opacity="0.6" stroke="#333" stroke-width="0.38">7.</text><text x="87.0" y="254.1" font-size="11.2" font-weight="normal" fill="#333" text-anchor="start" textLength="281.0" lengthAdjust="spacingAndGlyphs" opacity="0.62" stroke="#333" stroke-width="0.38">A camera that records what happens in a place to keep it safe.</text><text x="72.3" y="275.3" font-size="11.2" font-weight="normal" fill="#333" text-anchor="start" opacity="0.6" stroke="#333" stroke-width="0.38">8.</text><text x="87.0" y="275.3" font-size="11.2" font-weight="normal" fill="#333" text-anchor="start" textLength="177.0" lengthAdjust="spacingAndGlyphs" opacity="0.62" stroke="#333" stroke-width="0.38">A small light you can carry in your hand.</text><text x="72.3" y="296.5" font-size="11.2" font-weight="normal" fill="#333" text-anchor="start" opacity="0.6" stroke="#333" stroke-width="0.38">9.</text><text x="87.0" y="296.5" font-size="11.2" font-weight="normal" fill="#333" text-anchor="start" textLength="219.0" lengthAdjust="spacingAndGlyphs" opacity="0.62" stroke="#333" stroke-width="0.38">The soft material that melts when a candle burns.</text><text x="70.0" y="317.7" font-size="11.2" font-weight="normal" fill="#333" text-anchor="start" opacity="0.6" stroke="#333" stroke-width="0.38">10.</text><text x="87.0" y="317.7" font-size="11.2" font-weight="normal" fill="#333" text-anchor="start" textLength="212.0" lengthAdjust="spacingAndGlyphs" opacity="0.62" stroke="#333" stroke-width="0.38">Making you think something is wrong or secret.</text><text x="447.0" y="63.9" font-size="11.2" font-weight="bold" fill="#222" text-anchor="start" textLength="171.6" lengthAdjust="spacingAndGlyphs" opacity="0.85" stroke="#222" stroke-width="0.5">Match the words and definitions:</text><text x="453.8" y="129.0" font-size="10.4" font-weight="bold" fill="#1a1a1a" text-anchor="start" textLength="32.0" lengthAdjust="spacingAndGlyphs" stroke="#1a1a1a" stroke-width="0.5">motel</text><text x="453.8" y="149.7" font-size="10.4" font-weight="bold" fill="#1a1a1a" text-anchor="start" textLength="46.0" lengthAdjust="spacingAndGlyphs" stroke="#1a1a1a" stroke-width="0.5">haunted</text><text x="453.8" y="170.4" font-size="10.4" font-weight="bold" fill="#1a1a1a" text-anchor="start" textLength="89.0" lengthAdjust="spacingAndGlyphs" stroke="#1a1a1a" stroke-width="0.5">security camera</text><text x="453.8" y="191.1" font-size="10.4" font-weight="bold" fill="#1a1a1a" text-anchor="start" textLength="50.6" lengthAdjust="spacingAndGlyphs" stroke="#1a1a1a" stroke-width="0.5">flashlight</text><text x="453.8" y="211.8" font-size="10.4" font-weight="bold" fill="#1a1a1a" text-anchor="start" textLength="54.6" lengthAdjust="spacingAndGlyphs" stroke="#1a1a1a" stroke-width="0.5">basement</text><text x="453.8" y="232.5" font-size="10.4" font-weight="bold" fill="#1a1a1a" text-anchor="start" textLength="45.0" lengthAdjust="spacingAndGlyphs" stroke="#1a1a1a" stroke-width="0.5">keycard</text><text x="453.8" y="253.2" font-size="10.4" font-weight="bold" fill="#1a1a1a" text-anchor="start" textLength="64.7" lengthAdjust="spacingAndGlyphs" stroke="#1a1a1a" stroke-width="0.5">candle wax</text><text x="453.8" y="273.9" font-size="10.4" font-weight="bold" fill="#1a1a1a" text-anchor="start" textLength="56.0" lengthAdjust="spacingAndGlyphs" stroke="#1a1a1a" stroke-width="0.5">suspicious</text><text x="453.8" y="294.6" font-size="10.4" font-weight="bold" fill="#1a1a1a" text-anchor="start" textLength="56.0" lengthAdjust="spacingAndGlyphs" stroke="#1a1a1a" stroke-width="0.5">disappear</text><text x="453.8" y="315.3" font-size="10.4" font-weight="bold" fill="#1a1a1a" text-anchor="start" textLength="41.0" lengthAdjust="spacingAndGlyphs" stroke="#1a1a1a" stroke-width="0.5">confess</text><rect x="33.5" y="344.3" width="38" height="3" fill="#222" opacity=".6"/><rect x="621" y="343.5" width="6" height="5" fill="#555" opacity=".6"/></svg></svg>
<div class="lbl" style="left:550px;top:251.9px">3</div>
<svg class="thumb" style="left:713px;top:136px" width="170" height="99" viewBox="-8 -8.00 680 396" font-family="Liberation Sans"><rect x="-1" y="0" width="668" height="378" fill="none" stroke="#fff" stroke-width="6" opacity=".26" filter="url(#b1)"/><svg x="0" y="0" width="664" height="373.6" viewBox="0 0 664 373.6" overflow="hidden"><rect width="664" height="373.6" fill="#fff"/><svg x="352.5" y="0" width="311.5" height="373.6" viewBox="0 0 311.5 373.6" overflow="hidden"><rect width="311.5" height="373.6" fill="#0c1519"/><g filter="url(#bg1)"><rect x="0.0" y="0.0" width="70.3" height="373.6" fill="url(#g7)" /><rect x="70.3" y="0.0" width="126.6" height="373.6" fill="url(#g8)" /><rect x="70.3" y="175.3" width="81.6" height="51.8" fill="#0e1b22" /><g filter="url(#b1)" ><rect x="70.3" y="209.0" width="76.0" height="76.0" fill="#172830" /></g><g filter="url(#b2)" ><ellipse cx="88.3" cy="237.2" rx="20.0" ry="10.0" fill="#8c9ca3" /></g><g filter="url(#b2)" ><ellipse cx="115.3" cy="234.4" rx="30.0" ry="12.0" fill="#3f5660" /></g><g filter="url(#b2)" ><rect x="70.3" y="251.2" width="70.0" height="26.0" fill="#2a434d" /></g><rect x="151.9" y="223.1" width="45.0" height="25.3" fill="#101b21" /><rect x="160.3" y="248.4" width="33.8" height="6.8" fill="#2f3a3e" /><rect x="160.3" y="248.4" width="3.0" height="52.0" fill="#141c20" /><rect x="191.1" y="248.4" width="3.0" height="46.0" fill="#141c20" /><g filter="url(#b2)" ><path d="M185.7 186.5 Q171.6 152.8 180.0 124.7 T168.8 90.9" fill="none" stroke="#5f7d88" stroke-width="6" opacity=".55"/></g><g filter="url(#b1)" ><ellipse cx="185.7" cy="193.3" rx="9.0" ry="13.0" fill="#0d181d" /></g><polygon points="196.9,0.0 241.9,0.0 241.9,373.6 235.9,373.6 196.9,344.1" fill="url(#g9)" /><rect x="241.9" y="0.0" width="8.4" height="373.6" fill="#070d10" /><rect x="250.4" y="0.0" width="61.1" height="373.6" fill="url(#g10)" /><g filter="url(#b4)" ><rect x="292.6" y="68.4" width="32.5" height="36.6" fill="#2a5a68" /></g></g></svg><rect x="35" y="0" width="100" height="99.5" fill="#fdd47b"/><text stroke="#161616" stroke-width="1.1" stroke-linejoin="round" x="71.2" y="71.2" font-size="28" font-weight="bold" fill="#161616" text-anchor="start" textLength="160.3" lengthAdjust="spacingAndGlyphs">CASE INTRO</text><text x="71.2" y="133.6" font-size="10.6" font-weight="normal" fill="#222" text-anchor="start" textLength="237.0" lengthAdjust="spacingAndGlyphs" opacity="0.62" stroke="#222" stroke-width="0.2">The Moonlight Motel was a quiet, old building on the</text><text x="71.2" y="148.5" font-size="10.6" font-weight="normal" fill="#222" text-anchor="start" textLength="249.0" lengthAdjust="spacingAndGlyphs" opacity="0.62" stroke="#222" stroke-width="0.2">edge of town. Every Halloween, guests said they heard</text><text x="71.2" y="163.4" font-size="10.6" font-weight="normal" fill="#222" text-anchor="start" textLength="253.0" lengthAdjust="spacingAndGlyphs" opacity="0.62" stroke="#222" stroke-width="0.2">footsteps, whispers, and saw lights flickering in Room 13.</text><text x="71.2" y="178.3" font-size="10.6" font-weight="normal" fill="#222" text-anchor="start" textLength="245.0" lengthAdjust="spacingAndGlyphs" opacity="0.62" stroke="#222" stroke-width="0.2">Some people even ran away in the middle of the night,</text><text x="71.2" y="193.2" font-size="10.6" font-weight="normal" fill="#222" text-anchor="start" textLength="152.0" lengthAdjust="spacingAndGlyphs" opacity="0.62" stroke="#222" stroke-width="0.2">saying a ghost had touched them.</text><text x="71.2" y="222.0" font-size="10.6" font-weight="normal" fill="#222" text-anchor="start" textLength="242.0" lengthAdjust="spacingAndGlyphs" opacity="0.62" stroke="#222" stroke-width="0.2">This year, a man named Mr. Collins stayed in Room 13.</text><text x="71.2" y="237.0" font-size="10.6" font-weight="normal" fill="#222" text-anchor="start" textLength="249.0" lengthAdjust="spacingAndGlyphs" opacity="0.62" stroke="#222" stroke-width="0.2">He told the manager, "I don't believe in ghosts." But the</text><text x="71.2" y="252.0" font-size="10.6" font-weight="normal" fill="#222" text-anchor="start" textLength="252.0" lengthAdjust="spacingAndGlyphs" opacity="0.62" stroke="#222" stroke-width="0.2">next morning, the door was open, his suitcase was gone,</text><text x="71.2" y="267.0" font-size="10.6" font-weight="normal" fill="#222" text-anchor="start" textLength="216.6" lengthAdjust="spacingAndGlyphs" opacity="0.62" stroke="#222" stroke-width="0.2">and the room smelled of smoke. Mr. Collins had</text><text x="71.2" y="282.0" font-size="10.6" font-weight="normal" fill="#222" text-anchor="start" textLength="62.0" lengthAdjust="spacingAndGlyphs" opacity="0.62" stroke="#222" stroke-width="0.2">disappeared...</text><text x="71.2" y="312.1" font-size="11.0" font-weight="bold" fill="#111" text-anchor="start" textLength="204.0" lengthAdjust="spacingAndGlyphs" stroke="#111" stroke-width="0.5">What do you think happened to Mr. Collins?</text><rect x="33.5" y="344.3" width="38" height="3" fill="#222" opacity=".6"/><rect x="621" y="343.5" width="6" height="5" fill="#fff" opacity=".6"/></svg></svg>
<div class="lbl" style="left:768px;top:251.9px">4</div>
<svg class="thumb" style="left:931px;top:136px" width="170" height="99" viewBox="-8 -8.00 680 396" font-family="Liberation Sans"><rect x="-1" y="0" width="668" height="378" fill="none" stroke="#fff" stroke-width="6" opacity=".26" filter="url(#b1)"/><svg x="0" y="0" width="664" height="373.6" viewBox="0 0 664 373.6" overflow="hidden"><rect width="664" height="373.6" fill="#fff"/><rect x="35" y="0" width="100" height="99.5" fill="#fdd47b"/><text stroke="#161616" stroke-width="1.1" stroke-linejoin="round" x="71.2" y="71.2" font-size="28" font-weight="bold" fill="#161616" text-anchor="start" textLength="172.7" lengthAdjust="spacingAndGlyphs">CHARACTERS</text><text x="359.8" y="55.8" font-size="12.4" font-weight="bold" fill="#222" text-anchor="start" textLength="247.5" lengthAdjust="spacingAndGlyphs" opacity="0.8" stroke="#222" stroke-width="0.5">Read each person's description. Take notes on</text><text x="359.8" y="73.2" font-size="12.4" font-weight="bold" fill="#222" text-anchor="start" textLength="234.6" lengthAdjust="spacingAndGlyphs" opacity="0.8" stroke="#222" stroke-width="0.5">anything that seems important or suspicious.</text><svg x="70.0" y="125.8" width="76" height="97.3" viewBox="0 0 76 97.3" overflow="hidden"><g filter="url(#b1)"><rect x="0.0" y="0.0" width="76.0" height="97.3" fill="#20130f" /><g filter="url(#b2)" ><rect x="38.0" y="11.7" width="38.0" height="9.7" fill="#5a4a42" /><rect x="38.0" y="29.2" width="38.0" height="7.8" fill="#4a3a34" /><rect x="0.0" y="9.7" width="22.8" height="29.2" fill="#2e1e18" /></g><rect x="0.0" y="79.8" width="76.0" height="17.5" fill="#2c140d" /><rect x="0.0" y="75.9" width="76.0" height="6.8" fill="#74401f" /><ellipse cx="35.7" cy="56.4" rx="22.8" ry="21.4" fill="#12141a" /><ellipse cx="35.0" cy="26.3" rx="7.6" ry="9.7" fill="#120d0b" /><ellipse cx="35.7" cy="29.2" rx="4.9" ry="7.8" fill="#b08a74" /><polygon points="33.4,38.9 38.8,38.9 36.1,48.6" fill="#9a7560" /></g><rect width="76" height="97.3" fill="none" stroke="#1a1210" stroke-width="2.5" opacity=".55"/></svg><text x="108.0" y="239.5" font-size="11.2" font-weight="bold" fill="#111" text-anchor="middle" textLength="52.0" lengthAdjust="spacingAndGlyphs" stroke="#111" stroke-width="0.5">Mrs. Raven</text><text x="108.0" y="255.3" font-size="11.2" font-weight="normal" fill="#333" text-anchor="middle" textLength="40.0" lengthAdjust="spacingAndGlyphs" opacity="0.7" stroke="#333" stroke-width="0.38">Manager</text><text x="108.0" y="275.5" font-size="11.2" font-weight="normal" fill="#222" text-anchor="middle" textLength="60.0" lengthAdjust="spacingAndGlyphs" opacity="0.8" stroke="#222" stroke-width="0.38">Says she never</text><text x="108.0" y="289.3" font-size="11.2" font-weight="normal" fill="#222" text-anchor="middle" textLength="70.0" lengthAdjust="spacingAndGlyphs" opacity="0.8" stroke="#222" stroke-width="0.38">goes near Room 13,</text><text x="108.0" y="303.1" font-size="11.2" font-weight="normal" fill="#222" text-anchor="middle" textLength="88.0" lengthAdjust="spacingAndGlyphs" opacity="0.8" stroke="#222" stroke-width="0.38">but she likes to tell</text><text x="108.0" y="316.9" font-size="11.2" font-weight="normal" fill="#222" text-anchor="middle" textLength="60.0" lengthAdjust="spacingAndGlyphs" opacity="0.8" stroke="#222" stroke-width="0.38">guests ghost</text><text x="108.0" y="330.7" font-size="11.2" font-weight="normal" fill="#222" text-anchor="middle" textLength="30.0" lengthAdjust="spacingAndGlyphs" opacity="0.8" stroke="#222" stroke-width="0.38">stories.</text><svg x="182.4" y="125.8" width="76" height="97.3" viewBox="0 0 76 97.3" overflow="hidden"><g filter="url(#b1)"><rect x="0.0" y="0.0" width="76.0" height="97.3" fill="#14231f" /><g filter="url(#b2)" ><ellipse cx="16.7" cy="11.7" rx="9.9" ry="4.9" fill="#c8e0e0" /><rect x="3.8" y="19.5" width="38.0" height="53.5" fill="#2b4a48" /><rect x="39.5" y="24.3" width="15.2" height="58.4" fill="#4a5a4c" /></g><rect x="57.8" y="0.0" width="18.2" height="97.3" fill="#241a12" /><rect x="0.0" y="0.0" width="4.6" height="97.3" fill="#0b1210" /><g filter="url(#b2)" ><polygon points="34.2,83.7 76.0,77.8 76.0,97.3 22.8,97.3" fill="#7a6124" /><rect x="0.0" y="85.6" width="30.4" height="11.7" fill="#1d2a1f" /></g><ellipse cx="31.9" cy="37.0" rx="6.8" ry="12.6" fill="#5b87a0" /><rect x="26.6" y="46.7" width="9.9" height="37.0" fill="#0e1418" /><ellipse cx="32.7" cy="18.5" rx="3.8" ry="5.8" fill="#2a1e18" /></g><rect width="76" height="97.3" fill="none" stroke="#1a1210" stroke-width="2.5" opacity=".55"/></svg><text x="220.4" y="239.5" font-size="11.2" font-weight="bold" fill="#111" text-anchor="middle" textLength="24.0" lengthAdjust="spacingAndGlyphs" stroke="#111" stroke-width="0.5">Emily</text><text x="220.4" y="255.3" font-size="11.2" font-weight="normal" fill="#333" text-anchor="middle" textLength="36.0" lengthAdjust="spacingAndGlyphs" opacity="0.7" stroke="#333" stroke-width="0.38">Cleaner</text><text x="220.4" y="275.5" font-size="11.2" font-weight="normal" fill="#222" text-anchor="middle" textLength="58.0" lengthAdjust="spacingAndGlyphs" opacity="0.8" stroke="#222" stroke-width="0.38">Often works</text><text x="220.4" y="289.3" font-size="11.2" font-weight="normal" fill="#222" text-anchor="middle" textLength="62.0" lengthAdjust="spacingAndGlyphs" opacity="0.8" stroke="#222" stroke-width="0.38">night shifts so</text><text x="220.4" y="303.1" font-size="11.2" font-weight="normal" fill="#222" text-anchor="middle" textLength="64.0" lengthAdjust="spacingAndGlyphs" opacity="0.8" stroke="#222" stroke-width="0.38">she can make</text><text x="220.4" y="316.9" font-size="11.2" font-weight="normal" fill="#222" text-anchor="middle" textLength="60.0" lengthAdjust="spacingAndGlyphs" opacity="0.8" stroke="#222" stroke-width="0.38">more money.</text><svg x="294.8" y="125.8" width="76" height="97.3" viewBox="0 0 76 97.3" overflow="hidden"><g filter="url(#b1)"><rect x="0.0" y="0.0" width="76.0" height="97.3" fill="#3b444e" /><g filter="url(#b2)" ><ellipse cx="9.1" cy="40.9" rx="9.1" ry="7.8" fill="#9ab4c8" /><ellipse cx="66.9" cy="37.0" rx="7.6" ry="6.8" fill="#c8b08a" /><rect x="0.0" y="0.0" width="76.0" height="21.4" fill="#20262e" /><rect x="53.2" y="43.8" width="22.8" height="14.6" fill="#9a3a30" /></g><ellipse cx="38.0" cy="87.6" rx="38.0" ry="33.1" fill="#55181f" /><polygon points="28.9,54.5 47.1,54.5 38.0,79.8" fill="#7d858a" /><g filter="url(#b1)" ><line x1="9.1" y1="68.1" x2="21.3" y2="97.3" stroke="#12090b" stroke-width="5" /><line x1="54.7" y1="63.2" x2="68.4" y2="97.3" stroke="#12090b" stroke-width="5" /><line x1="3.8" y1="83.7" x2="72.2" y2="77.8" stroke="#1a0c10" stroke-width="5" /><line x1="22.8" y1="60.3" x2="16.7" y2="97.3" stroke="#7a2a32" stroke-width="3" /></g><ellipse cx="37.2" cy="37.0" rx="7.6" ry="11.7" fill="#9a7560" /><ellipse cx="37.2" cy="25.3" rx="9.1" ry="6.8" fill="#1c2024" /><ellipse cx="37.2" cy="44.8" rx="6.1" ry="4.9" fill="#33251f" /></g><rect width="76" height="97.3" fill="none" stroke="#1a1210" stroke-width="2.5" opacity=".55"/></svg><text x="332.8" y="239.5" font-size="11.2" font-weight="bold" fill="#111" text-anchor="middle" textLength="48.0" lengthAdjust="spacingAndGlyphs" stroke="#111" stroke-width="0.5">Mr. Green</text><text x="332.8" y="255.3" font-size="11.2" font-weight="normal" fill="#333" text-anchor="middle" textLength="80.0" lengthAdjust="spacingAndGlyphs" opacity="0.7" stroke="#333" stroke-width="0.38">Guest in Room 12</text><text x="332.8" y="275.5" font-size="11.2" font-weight="normal" fill="#222" text-anchor="middle" textLength="80.0" lengthAdjust="spacingAndGlyphs" opacity="0.8" stroke="#222" stroke-width="0.38">A frequent motel</text><text x="332.8" y="289.3" font-size="11.2" font-weight="normal" fill="#222" text-anchor="middle" textLength="54.0" lengthAdjust="spacingAndGlyphs" opacity="0.8" stroke="#222" stroke-width="0.38">visitor, rarely</text><text x="332.8" y="303.1" font-size="11.2" font-weight="normal" fill="#222" text-anchor="middle" textLength="70.0" lengthAdjust="spacingAndGlyphs" opacity="0.8" stroke="#222" stroke-width="0.38">has been here a</text><text x="332.8" y="316.9" font-size="11.2" font-weight="normal" fill="#222" text-anchor="middle" textLength="54.0" lengthAdjust="spacingAndGlyphs" opacity="0.8" stroke="#222" stroke-width="0.38">couple of times.</text><svg x="407.2" y="125.8" width="76" height="97.3" viewBox="0 0 76 97.3" overflow="hidden"><g filter="url(#b1)"><rect x="0.0" y="0.0" width="76.0" height="97.3" fill="#251a14" /><g filter="url(#b2)" ><rect x="56.2" y="26.3" width="18.2" height="19.5" fill="#88aed0" /><rect x="47.1" y="0.0" width="28.9" height="17.5" fill="#4a3a2c" /><rect x="60.8" y="4.9" width="15.2" height="11.7" fill="#a0b8c8" /></g><ellipse cx="28.9" cy="72.0" rx="31.9" ry="38.9" fill="#121419" /><ellipse cx="30.4" cy="22.4" rx="8.4" ry="11.7" fill="#6e5040" /><ellipse cx="30.4" cy="14.6" rx="8.4" ry="5.8" fill="#140f0c" /><g filter="url(#b1)" ><ellipse cx="56.2" cy="58.4" rx="10.6" ry="4.9" fill="#7a5c4c" /></g></g><rect width="76" height="97.3" fill="none" stroke="#1a1210" stroke-width="2.5" opacity=".55"/></svg><text x="445.2" y="239.5" font-size="11.2" font-weight="bold" fill="#111" text-anchor="middle" textLength="20.0" lengthAdjust="spacingAndGlyphs" stroke="#111" stroke-width="0.5">Jack</text><text x="445.2" y="255.3" font-size="11.2" font-weight="normal" fill="#333" text-anchor="middle" textLength="54.0" lengthAdjust="spacingAndGlyphs" opacity="0.7" stroke="#333" stroke-width="0.38">Night guard</text><text x="445.2" y="275.5" font-size="11.2" font-weight="normal" fill="#222" text-anchor="middle" textLength="68.0" lengthAdjust="spacingAndGlyphs" opacity="0.8" stroke="#222" stroke-width="0.38">Has a strange</text><text x="445.2" y="289.3" font-size="11.2" font-weight="normal" fill="#222" text-anchor="middle" textLength="90.0" lengthAdjust="spacingAndGlyphs" opacity="0.8" stroke="#222" stroke-width="0.38">sense of humor that</text><text x="445.2" y="303.1" font-size="11.2" font-weight="normal" fill="#222" text-anchor="middle" textLength="72.0" lengthAdjust="spacingAndGlyphs" opacity="0.8" stroke="#222" stroke-width="0.38">the manager and</text><text x="445.2" y="316.9" font-size="11.2" font-weight="normal" fill="#222" text-anchor="middle" textLength="70.0" lengthAdjust="spacingAndGlyphs" opacity="0.8" stroke="#222" stroke-width="0.38">the cleaner don't</text><text x="445.2" y="330.7" font-size="11.2" font-weight="normal" fill="#222" text-anchor="middle" textLength="52.0" lengthAdjust="spacingAndGlyphs" opacity="0.8" stroke="#222" stroke-width="0.38">understand.</text><svg x="519.6" y="125.8" width="76" height="97.3" viewBox="0 0 76 97.3" overflow="hidden"><g filter="url(#b1)"><rect x="0.0" y="0.0" width="76.0" height="97.3" fill="#6a4c30" /><g filter="url(#b2)" ><ellipse cx="38.0" cy="9.7" rx="12.9" ry="13.6" fill="#f0d8a8" /><rect x="24.3" y="9.7" width="30.4" height="73.0" fill="#8c6c46" /></g><rect x="0.0" y="0.0" width="22.8" height="97.3" fill="#553a24" /><rect x="60.8" y="0.0" width="15.2" height="97.3" fill="#452e1c" /><ellipse cx="39.5" cy="31.1" rx="7.6" ry="14.6" fill="#1c1410" /><ellipse cx="39.5" cy="27.2" rx="3.4" ry="5.4" fill="#9a755c" /><ellipse cx="39.5" cy="53.5" rx="9.9" ry="15.6" fill="#8a8272" /><rect x="31.9" y="64.2" width="16.7" height="29.2" fill="#2a1e18" /><rect x="0.0" y="90.5" width="76.0" height="6.8" fill="#2e1e12" /></g><rect width="76" height="97.3" fill="none" stroke="#1a1210" stroke-width="2.5" opacity=".55"/></svg><text x="557.6" y="239.5" font-size="11.2" font-weight="bold" fill="#111" text-anchor="middle" textLength="54.0" lengthAdjust="spacingAndGlyphs" stroke="#111" stroke-width="0.5">Nina Lopez</text><text x="557.6" y="255.3" font-size="11.2" font-weight="normal" fill="#333" text-anchor="middle" textLength="80.0" lengthAdjust="spacingAndGlyphs" opacity="0.7" stroke="#333" stroke-width="0.38">Guest in Room 14</text><text x="557.6" y="275.5" font-size="11.2" font-weight="normal" fill="#222" text-anchor="middle" textLength="80.0" lengthAdjust="spacingAndGlyphs" opacity="0.8" stroke="#222" stroke-width="0.38">Asked for a room</text><text x="557.6" y="289.3" font-size="11.2" font-weight="normal" fill="#222" text-anchor="middle" textLength="70.0" lengthAdjust="spacingAndGlyphs" opacity="0.8" stroke="#222" stroke-width="0.38">close to Room 13,</text><text x="557.6" y="303.1" font-size="11.2" font-weight="normal" fill="#222" text-anchor="middle" textLength="68.0" lengthAdjust="spacingAndGlyphs" opacity="0.8" stroke="#222" stroke-width="0.38">saying she likes</text><text x="557.6" y="316.9" font-size="11.2" font-weight="normal" fill="#222" text-anchor="middle" textLength="90.0" lengthAdjust="spacingAndGlyphs" opacity="0.8" stroke="#222" stroke-width="0.38">"interesting stories."</text><rect x="33.5" y="344.3" width="38" height="3" fill="#222" opacity=".6"/><rect x="621" y="343.5" width="6" height="5" fill="#555" opacity=".6"/></svg></svg>
<div class="lbl" style="left:986px;top:251.9px">5</div>
<svg class="thumb" style="left:59px;top:298px" width="170" height="99" viewBox="-8 -9.20 680 396" font-family="Liberation Sans"><rect x="-1" y="0" width="668" height="378" fill="none" stroke="#fff" stroke-width="6" opacity=".26" filter="url(#b1)"/><svg x="0" y="0" width="664" height="373.6" viewBox="0 0 664 373.6" overflow="hidden"><rect width="664" height="373.6" fill="#fff"/><rect x="33" y="0" width="103.5" height="179.3" fill="#fdd47b"/><text stroke="#161616" stroke-width="1.1" stroke-linejoin="round" x="68.4" y="69.6" font-size="26" font-weight="bold" fill="#161616" text-anchor="start" textLength="121.0" lengthAdjust="spacingAndGlyphs">TIMELINE</text><text stroke="#161616" stroke-width="1.1" stroke-linejoin="round" x="68.4" y="97.7" font-size="26" font-weight="bold" fill="#161616" text-anchor="start" textLength="145.0" lengthAdjust="spacingAndGlyphs">OF EVENTS</text><text x="68.4" y="226.4" font-size="12.4" font-weight="bold" fill="#222" text-anchor="start" textLength="156.0" lengthAdjust="spacingAndGlyphs" opacity="0.8" stroke="#222" stroke-width="0.5">Look at the timeline of events.</text><text x="68.4" y="245.5" font-size="12.4" font-weight="bold" fill="#222" text-anchor="start" textLength="187.0" lengthAdjust="spacingAndGlyphs" opacity="0.8" stroke="#222" stroke-width="0.5">What do you notice? Can you spot</text><text x="68.4" y="264.6" font-size="12.4" font-weight="bold" fill="#222" text-anchor="start" textLength="167.6" lengthAdjust="spacingAndGlyphs" opacity="0.8" stroke="#222" stroke-width="0.5">anything strange or suspicious?</text><text x="68.4" y="283.2" font-size="12.4" font-weight="bold" fill="#222" text-anchor="start" textLength="129.0" lengthAdjust="spacingAndGlyphs" opacity="0.8" stroke="#222" stroke-width="0.5">Discuss with your group.</text><line x1="349.7" y1="84" x2="349.7" y2="293" stroke="#aaa" stroke-width="1" stroke-dasharray="3 3"/><circle cx="349.7" cy="83.7" r="8.3" fill="#fff"/><circle cx="349.7" cy="83.7" r="7.6" fill="none" stroke="#8a8a8a" stroke-width="1.8"/><circle cx="349.7" cy="83.7" r="4" fill="#222"/><text x="376.0" y="76.4" font-size="9.4" font-weight="bold" fill="#111" text-anchor="start" textLength="41.0" lengthAdjust="spacingAndGlyphs" stroke="#111" stroke-width="0.5">9:00 p.m.</text><text x="376.0" y="92.8" font-size="9.4" font-weight="normal" fill="#222" text-anchor="start" textLength="139.5" lengthAdjust="spacingAndGlyphs" opacity="0.7" stroke="#222" stroke-width="0.38">Mr. Collins checks into Room 13.</text><circle cx="349.7" cy="132.6" r="8.3" fill="#fff"/><circle cx="349.7" cy="132.6" r="7.6" fill="none" stroke="#8a8a8a" stroke-width="1.8"/><circle cx="349.7" cy="132.6" r="4" fill="#222"/><text x="376.0" y="125.4" font-size="9.4" font-weight="bold" fill="#111" text-anchor="start" textLength="45.0" lengthAdjust="spacingAndGlyphs" stroke="#111" stroke-width="0.5">11:20 p.m.</text><text x="376.0" y="142.4" font-size="9.4" font-weight="normal" fill="#222" text-anchor="start" textLength="221.0" lengthAdjust="spacingAndGlyphs" opacity="0.7" stroke="#222" stroke-width="0.38">The security camera near Room 13 stops working.</text><circle cx="349.7" cy="183.8" r="8.3" fill="#fff"/><circle cx="349.7" cy="183.8" r="7.6" fill="none" stroke="#8a8a8a" stroke-width="1.8"/><circle cx="349.7" cy="183.8" r="4" fill="#222"/><text x="376.0" y="176.1" font-size="9.4" font-weight="bold" fill="#111" text-anchor="start" textLength="45.0" lengthAdjust="spacingAndGlyphs" stroke="#111" stroke-width="0.5">11:45 p.m.</text><text x="376.0" y="191.4" font-size="9.4" font-weight="normal" fill="#222" text-anchor="start" textLength="186.0" lengthAdjust="spacingAndGlyphs" opacity="0.7" stroke="#222" stroke-width="0.38">A light moves under the door of Room 13.</text><circle cx="349.7" cy="239" r="8.3" fill="#fff"/><circle cx="349.7" cy="239" r="7.6" fill="none" stroke="#8a8a8a" stroke-width="1.8"/><circle cx="349.7" cy="239" r="4" fill="#222"/><text x="376.0" y="230.7" font-size="9.4" font-weight="bold" fill="#111" text-anchor="start" textLength="45.0" lengthAdjust="spacingAndGlyphs" stroke="#111" stroke-width="0.5">12:00 a.m.</text><text x="376.0" y="246.4" font-size="9.4" font-weight="normal" fill="#222" text-anchor="start" textLength="147.0" lengthAdjust="spacingAndGlyphs" opacity="0.7" stroke="#222" stroke-width="0.38">The camera starts working again.</text><circle cx="349.7" cy="293.5" r="8.3" fill="#fff"/><circle cx="349.7" cy="293.5" r="7.6" fill="none" stroke="#8a8a8a" stroke-width="1.8"/><circle cx="349.7" cy="293.5" r="4" fill="#222"/><text x="376.0" y="285.8" font-size="9.4" font-weight="bold" fill="#111" text-anchor="start" textLength="38.0" lengthAdjust="spacingAndGlyphs" stroke="#111" stroke-width="0.5">Morning</text><text x="376.0" y="301.4" font-size="9.4" font-weight="normal" fill="#222" text-anchor="start" textLength="80.5" lengthAdjust="spacingAndGlyphs" opacity="0.7" stroke="#222" stroke-width="0.38">Mr. Collins is gone.</text><rect x="33.5" y="344.3" width="38" height="3" fill="#222" opacity=".6"/><rect x="621" y="343.5" width="6" height="5" fill="#555" opacity=".6"/></svg></svg>
<div class="lbl" style="left:114px;top:414.2px">6</div>
<svg class="thumb" style="left:277px;top:298px" width="170" height="99" viewBox="-8 -9.20 680 396" font-family="Liberation Sans"><rect x="-1" y="0" width="668" height="378" fill="none" stroke="#fff" stroke-width="6" opacity=".26" filter="url(#b1)"/><svg x="0" y="0" width="664" height="373.6" viewBox="0 0 664 373.6" overflow="hidden"><rect width="664" height="373.6" fill="#fff"/><svg x="0" y="0" width="344" height="373.6" viewBox="0 0 344 373.6" overflow="hidden"><rect width="344" height="373.6" fill="#1a2a33"/><g filter="url(#bg1)"><polygon points="0.0,0.0 344.0,0.0 209.0,168.1 152.8,168.1" fill="url(#g11)" /><polygon points="0.0,0.0 152.8,168.1 152.8,246.8 0.0,373.6" fill="url(#g12)" /><polygon points="344.0,0.0 209.0,168.1 209.0,246.8 344.0,373.6" fill="url(#g13)" /><polygon points="0.0,373.6 152.8,246.8 209.0,246.8 344.0,373.6" fill="url(#g14)" /><rect x="152.8" y="168.1" width="56.3" height="78.8" fill="#2e3a42" /><rect x="152.8" y="168.1" width="56.3" height="78.8" fill="#3c4a52" /><rect x="159.8" y="175.8" width="42.3" height="65.5" fill="#27333a" /><rect x="165.8" y="182.4" width="30.3" height="54.1" fill="#38454c" /><rect x="171.8" y="189.0" width="18.3" height="42.7" fill="#242f36" /><polygon points="63.9,92.1 86.4,107.3 86.4,342.5 63.9,365.0" fill="#0f171d" /><polygon points="68.4,103.4 75.7,108.4 75.7,350.9 68.4,358.2" fill="#5c5a52" /><polygon points="269.2,105.0 290.6,89.3 290.6,370.6 269.2,348.1" fill="#0f171d" /><polygon points="281.1,102.8 286.7,98.9 286.7,365.0 281.1,359.3" fill="#4a4a45" /><polygon points="131.4,151.2 139.3,156.8 139.3,263.7 131.4,272.1" fill="#1a242b" /><polygon points="221.4,156.8 229.3,151.2 229.3,272.1 221.4,263.7" fill="#1a242b" /><g filter="url(#b8)" ><rect x="0.0" y="0.0" width="344.0" height="24.0" fill="#0a1116" /></g><g filter="url(#b8)" ><ellipse cx="178.1" cy="78.0" rx="55.0" ry="24.0" fill="#8a9aa0" opacity=".45"/></g><polygon points="151.2,65.7 205.0,65.7 209.0,90.4 147.2,90.4" fill="#efeee0" /><rect x="165.2" y="141.6" width="28.1" height="8.4" fill="#e8e6d4" /><rect x="169.7" y="160.7" width="18.0" height="5.6" fill="#c8c8ba" /><rect x="296.2" y="35.8" width="22.0" height="7.0" fill="#8a2530" /></g></svg><text stroke="#161616" stroke-width="1.1" stroke-linejoin="round" x="381.8" y="81.3" font-size="27.5" font-weight="bold" fill="#161616" text-anchor="start" textLength="86.0" lengthAdjust="spacingAndGlyphs">CLUE 1</text><text x="384.6" y="119.5" font-size="13.6" font-weight="bold" fill="#1d1d1d" text-anchor="start" textLength="206.0" lengthAdjust="spacingAndGlyphs" opacity="0.82" stroke="#1d1d1d" stroke-width="0.5">The security camera near Room 13</text><text x="384.6" y="140.3" font-size="13.6" font-weight="bold" fill="#1d1d1d" text-anchor="start" textLength="219.4" lengthAdjust="spacingAndGlyphs" opacity="0.82" stroke="#1d1d1d" stroke-width="0.5">stopped working between 11:20 and</text><text x="384.6" y="161.1" font-size="13.6" font-weight="bold" fill="#1d1d1d" text-anchor="start" textLength="221.0" lengthAdjust="spacingAndGlyphs" opacity="0.82" stroke="#1d1d1d" stroke-width="0.5">midnight, then started again by itself.</text><text x="384.6" y="208.7" font-size="9.4" font-weight="normal" fill="#222" text-anchor="start" textLength="216.6" lengthAdjust="spacingAndGlyphs" opacity="0.62" stroke="#222" stroke-width="0.28">Why do you think the camera stopped working?</text><text x="384.6" y="226.7" font-size="9.4" font-weight="normal" fill="#222" text-anchor="start" textLength="211.0" lengthAdjust="spacingAndGlyphs" opacity="0.62" stroke="#222" stroke-width="0.28">Could someone have turned it off on purpose?</text><rect x="33.5" y="344.3" width="38" height="3" fill="#fff" opacity=".6"/><rect x="621" y="343.5" width="6" height="5" fill="#555" opacity=".6"/></svg></svg>
<div class="lbl" style="left:332px;top:414.2px">7</div>
<svg class="thumb" style="left:495px;top:298px" width="170" height="99" viewBox="-8 -9.20 680 396" font-family="Liberation Sans"><rect x="-1" y="0" width="668" height="378" fill="none" stroke="#fff" stroke-width="6" opacity=".26" filter="url(#b1)"/><svg x="0" y="0" width="664" height="373.6" viewBox="0 0 664 373.6" overflow="hidden"><rect width="664" height="373.6" fill="#fff"/><svg x="0" y="0" width="344" height="373.6" viewBox="0 0 344 373.6" overflow="hidden"><rect width="344" height="373.6" fill="#2a2e36"/><g filter="url(#bg1)"><rect x="0.0" y="0.0" width="344.0" height="373.6" fill="url(#g15)" /><g filter="url(#b16)" ><polygon points="159.0,21.8 187.0,21.8 293.0,373.6 53.0,373.6" fill="#5d6168" opacity=".8"/></g><g filter="url(#b8)" ><polygon points="163.0,21.8 183.0,21.8 218.0,151.8 128.0,151.8" fill="#77776f" opacity=".55"/></g><g filter="url(#b2)" ><rect x="234.4" y="99.4" width="30.0" height="22.0" fill="#3a3434" /></g><rect x="20.6" y="162.4" width="101.3" height="132.2" fill="#3d434c" /><rect x="20.6" y="140.4" width="101.3" height="22.0" fill="#2f343d" /><ellipse cx="62.8" cy="207.4" rx="37.0" ry="40.0" fill="#4c525b" /><ellipse cx="62.8" cy="207.4" rx="31.0" ry="34.0" fill="#272c35" /><rect x="245.6" y="173.7" width="101.3" height="115.3" fill="#3c424b" /><ellipse cx="293.4" cy="218.7" rx="36.0" ry="38.0" fill="#4c525b" /><ellipse cx="293.4" cy="218.7" rx="30.0" ry="32.0" fill="#292e37" /><rect x="135.9" y="151.2" width="98.5" height="56.3" fill="#3b4049" /><rect x="139.9" y="176.5" width="90.5" height="14.0" fill="#5c6068" /><rect x="0.0" y="294.6" width="344.0" height="18.0" fill="#1c2027" /><rect x="0.0" y="310.4" width="344.0" height="373.6" fill="url(#g16)" /><g filter="url(#b2)" ><polygon points="-0.2,325.6 105.0,318.8 68.4,376.2 -0.2,376.2" fill="#686c73" /></g><g filter="url(#b2)" ><polygon points="251.2,322.8 346.9,322.8 346.9,376.2 290.6,376.2" fill="#50545b" /></g><g filter="url(#b2)" ><polygon points="105.0,320.0 251.2,320.0 265.3,348.1 90.9,348.1" fill="#4a4e55" /></g><rect x="96.5" y="200.7" width="157.5" height="114.8" fill="url(#g17)" /><g filter="url(#b1)" ><rect x="92.6" y="193.9" width="166.0" height="9.6" fill="#b9bcc0" /></g><ellipse cx="154.5" cy="228.3" rx="6.0" ry="6.0" fill="#8f9298" /><ellipse cx="154.5" cy="228.3" rx="3.5" ry="3.5" fill="#15181c" /><ellipse cx="191.0" cy="241.2" rx="6.0" ry="6.0" fill="#8f9298" /><ellipse cx="191.0" cy="241.2" rx="3.5" ry="3.5" fill="#15181c" /><rect x="119.0" y="297.5" width="61.9" height="6.2" fill="#7e8186" /><rect x="103.3" y="314.3" width="9.0" height="44.0" fill="#16191d" /><rect x="235.5" y="314.3" width="9.0" height="44.0" fill="#16191d" /><ellipse cx="117.9" cy="332.3" rx="9.0" ry="9.0" fill="#1a1d21" /><ellipse cx="238.3" cy="332.3" rx="9.0" ry="9.0" fill="#1a1d21" /><g filter="url(#b2)" ><polygon points="43.1,373.4 90.9,350.9 279.4,350.9 301.9,376.2" fill="#111418" /></g><g filter="url(#b1)" ><ellipse cx="173.0" cy="17.8" rx="34.0" ry="14.0" fill="#14171c" /></g><g filter="url(#b2)" ><ellipse cx="173.0" cy="23.8" rx="30.0" ry="11.0" fill="#b88a30" /></g><ellipse cx="173.0" cy="23.8" rx="26.0" ry="8.5" fill="#f0c458" /><g filter="url(#b1)" ><ellipse cx="173.0" cy="22.8" rx="10.0" ry="5.0" fill="#fff6d8" /></g><rect x="0.0" y="0.0" width="344.0" height="373.6" fill="url(#g18)" /></g></svg><text stroke="#161616" stroke-width="1.1" stroke-linejoin="round" x="381.8" y="81.3" font-size="27.5" font-weight="bold" fill="#161616" text-anchor="start" textLength="86.0" lengthAdjust="spacingAndGlyphs">CLUE 2</text><text x="384.6" y="119.5" font-size="13.6" font-weight="bold" fill="#1d1d1d" text-anchor="start" textLength="205.0" lengthAdjust="spacingAndGlyphs" opacity="0.82" stroke="#1d1d1d" stroke-width="0.5">A white bedsheet was found in the</text><text x="384.6" y="140.3" font-size="13.6" font-weight="bold" fill="#1d1d1d" text-anchor="start" textLength="239.0" lengthAdjust="spacingAndGlyphs" opacity="0.82" stroke="#1d1d1d" stroke-width="0.5">laundry room. It smelled like smoke and</text><text x="384.6" y="161.1" font-size="13.6" font-weight="bold" fill="#1d1d1d" text-anchor="start" textLength="146.0" lengthAdjust="spacingAndGlyphs" opacity="0.82" stroke="#1d1d1d" stroke-width="0.5">had two small holes in it.</text><text x="384.6" y="208.7" font-size="9.4" font-weight="normal" fill="#222" text-anchor="start" textLength="172.0" lengthAdjust="spacingAndGlyphs" opacity="0.62" stroke="#222" stroke-width="0.28">Who do you think used the bedsheet?</text><text x="384.6" y="226.7" font-size="9.4" font-weight="normal" fill="#222" text-anchor="start" textLength="207.0" lengthAdjust="spacingAndGlyphs" opacity="0.62" stroke="#222" stroke-width="0.28">What could the holes and smoke smell mean?</text><rect x="33.5" y="344.3" width="38" height="3" fill="#fff" opacity=".6"/><rect x="621" y="343.5" width="6" height="5" fill="#555" opacity=".6"/></svg></svg>
<div class="lbl" style="left:550px;top:414.2px">8</div>
<svg class="thumb" style="left:713px;top:298px" width="170" height="99" viewBox="-8 -9.20 680 396" font-family="Liberation Sans"><rect x="-1" y="0" width="668" height="378" fill="none" stroke="#fff" stroke-width="6" opacity=".26" filter="url(#b1)"/><svg x="0" y="0" width="664" height="373.6" viewBox="0 0 664 373.6" overflow="hidden"><rect width="664" height="373.6" fill="#fff"/><svg x="0" y="0" width="344" height="373.6" viewBox="0 0 344 373.6" overflow="hidden"><rect width="344" height="373.6" fill="#0a1317"/><g filter="url(#bg1)"><rect x="0.0" y="0.0" width="344.0" height="373.6" fill="#0a1317" /><rect x="17.8" y="2.1" width="50.6" height="295.4" fill="url(#g19)" /><rect x="270.9" y="2.1" width="50.6" height="295.4" fill="url(#g20)" /><rect x="74.0" y="2.1" width="191.3" height="281.3" fill="url(#g21)" /><clipPath id="c9"><rect x="74.0" y="2.1" width="191.3" height="281.3"/></clipPath><g clip-path="url(#c9)"><ellipse cx="166.8" cy="268.7" rx="118.0" ry="150.0" fill="url(#g22)" /></g><g filter="url(#b2)" ><polygon points="158.8,281.7 174.8,281.7 170.8,195.3 167.6,109.0 166.0,109.0 162.8,195.3" fill="url(#g23)" /></g><rect x="0.0" y="289.0" width="344.0" height="373.6" fill="url(#g24)" /><g filter="url(#b1)" ><rect x="74.0" y="278.9" width="189.6" height="5.1" fill="#c09470" /></g><g filter="url(#b4)" ><ellipse cx="166.8" cy="290.1" rx="45.0" ry="7.0" fill="#7a5238" opacity=".6"/></g><g filter="url(#b2)" ><ellipse cx="166.8" cy="287.9" rx="22.0" ry="5.0" fill="#f0c8a0" /></g><g filter="url(#b1)" ><ellipse cx="166.8" cy="287.9" rx="10.0" ry="3.5" fill="#ffffff" /></g></g></svg><text stroke="#161616" stroke-width="1.1" stroke-linejoin="round" x="381.8" y="81.3" font-size="27.5" font-weight="bold" fill="#161616" text-anchor="start" textLength="86.0" lengthAdjust="spacingAndGlyphs">CLUE 3</text><text x="384.6" y="119.5" font-size="13.6" font-weight="bold" fill="#1d1d1d" text-anchor="start" textLength="232.0" lengthAdjust="spacingAndGlyphs" opacity="0.82" stroke="#1d1d1d" stroke-width="0.5">Emily, the cleaner, said she saw a light</text><text x="384.6" y="140.3" font-size="13.6" font-weight="bold" fill="#1d1d1d" text-anchor="start" textLength="210.0" lengthAdjust="spacingAndGlyphs" opacity="0.82" stroke="#1d1d1d" stroke-width="0.5">moving under the door of Room 13</text><text x="384.6" y="161.1" font-size="13.6" font-weight="bold" fill="#1d1d1d" text-anchor="start" textLength="101.0" lengthAdjust="spacingAndGlyphs" opacity="0.82" stroke="#1d1d1d" stroke-width="0.5">around midnight.</text><text x="384.6" y="208.7" font-size="9.4" font-weight="normal" fill="#222" text-anchor="start" textLength="146.0" lengthAdjust="spacingAndGlyphs" opacity="0.62" stroke="#222" stroke-width="0.28">What could the moving light be?</text><text x="384.6" y="226.7" font-size="9.4" font-weight="normal" fill="#222" text-anchor="start" textLength="183.0" lengthAdjust="spacingAndGlyphs" opacity="0.62" stroke="#222" stroke-width="0.28">Do you think it was a ghost or a person?</text><rect x="33.5" y="344.3" width="38" height="3" fill="#fff" opacity=".6"/><rect x="621" y="343.5" width="6" height="5" fill="#555" opacity=".6"/></svg></svg>
<div class="lbl" style="left:768px;top:414.2px">9</div>
<svg class="thumb" style="left:931px;top:298px" width="170" height="99" viewBox="-8 -9.20 680 396" font-family="Liberation Sans"><rect x="-1" y="0" width="668" height="378" fill="none" stroke="#fff" stroke-width="6" opacity=".26" filter="url(#b1)"/><svg x="0" y="0" width="664" height="373.6" viewBox="0 0 664 373.6" overflow="hidden"><rect width="664" height="373.6" fill="#fff"/><svg x="0" y="0" width="344" height="373.6" viewBox="0 0 344 373.6" overflow="hidden"><rect width="344" height="373.6" fill="#06121a"/><g filter="url(#bg1)"><rect x="0.0" y="0.0" width="344.0" height="373.6" fill="url(#g25)" /><g filter="url(#b4)" ><polygon points="40.0,45.0 112.0,85.0 112.0,230.0 40.0,300.0" fill="#0b212b" /><polygon points="320.0,45.0 250.0,85.0 250.0,230.0 320.0,300.0" fill="#0a1e28" /></g><g filter="url(#b8)" ><polygon points="112.0,222.0 246.0,222.0 330.0,330.0 30.0,330.0" fill="#0d2631" opacity=".9"/></g><g filter="url(#b8)" ><rect x="110.0" y="84.0" width="140.0" height="146.0" fill="#153540" /></g><rect x="117.0" y="90.0" width="126.0" height="132.0" fill="url(#g26)" /><rect x="117.0" y="90.0" width="126.0" height="132.0" fill="none" stroke="#3f6d7b" stroke-width="3" filter="url(#b1)" opacity=".5"/><g filter="url(#b8)" ><ellipse cx="181.0" cy="185.0" rx="34.0" ry="42.0" fill="#5f8f9d" opacity=".85"/></g><g filter="url(#b1)" ><ellipse cx="127.0" cy="120.0" rx="5.0" ry="5.0" fill="#e0f4f8" /></g><g filter="url(#b8)" ><polygon points="174.0,172.0 186.0,172.0 228.0,300.0 132.0,300.0" fill="#2f6070" opacity=".85"/></g><g filter="url(#b4)" ><ellipse cx="181.0" cy="328.0" rx="90.0" ry="34.0" fill="#718c94" /></g><g filter="url(#b4)" ><ellipse cx="181.0" cy="316.0" rx="66.0" ry="18.0" fill="#a8babf" /></g><g filter="url(#b4)" ><rect x="60.0" y="345.0" width="240.0" height="30.0" fill="#050e14" opacity=".7"/></g><g filter="url(#b1)" ><ellipse cx="180.0" cy="107.0" rx="11.5" ry="15.0" fill="#02070a" /><polygon points="150.0,150.0 154.0,128.0 168.0,116.0 192.0,116.0 206.0,128.0 210.0,150.0 208.0,180.0 200.0,206.0 186.0,204.0 181.0,172.0 176.0,204.0 162.0,206.0 153.0,180.0" fill="#02070a" /></g><g filter="url(#b1)" ><ellipse cx="180.0" cy="169.0" rx="4.0" ry="4.0" fill="#ffffff" /></g><g filter="url(#b2)" ><ellipse cx="180.0" cy="180.0" rx="6.0" ry="12.0" fill="#c8e4ea" opacity=".7"/></g><rect x="0.0" y="0.0" width="344.0" height="373.6" fill="url(#g27)" /></g></svg><text stroke="#161616" stroke-width="1.1" stroke-linejoin="round" x="381.8" y="81.3" font-size="27.5" font-weight="bold" fill="#161616" text-anchor="start" textLength="86.0" lengthAdjust="spacingAndGlyphs">CLUE 4</text><text x="384.6" y="119.5" font-size="13.6" font-weight="bold" fill="#1d1d1d" text-anchor="start" textLength="227.0" lengthAdjust="spacingAndGlyphs" opacity="0.82" stroke="#1d1d1d" stroke-width="0.5">Mr. Green, the guest in room 12, said</text><text x="384.6" y="140.3" font-size="13.6" font-weight="bold" fill="#1d1d1d" text-anchor="start" textLength="233.5" lengthAdjust="spacingAndGlyphs" opacity="0.82" stroke="#1d1d1d" stroke-width="0.5">he saw a person with a flashlight in the</text><text x="384.6" y="161.1" font-size="13.6" font-weight="bold" fill="#1d1d1d" text-anchor="start" textLength="216.6" lengthAdjust="spacingAndGlyphs" opacity="0.82" stroke="#1d1d1d" stroke-width="0.5">hallway, but their face was covered.</text><text x="384.6" y="208.7" font-size="9.4" font-weight="normal" fill="#222" text-anchor="start" textLength="225.6" lengthAdjust="spacingAndGlyphs" opacity="0.62" stroke="#222" stroke-width="0.28">Why do you think the person's face was covered?</text><text x="384.6" y="226.7" font-size="9.4" font-weight="normal" fill="#222" text-anchor="start" textLength="207.0" lengthAdjust="spacingAndGlyphs" opacity="0.62" stroke="#222" stroke-width="0.28">Who might have been walking in the hallway?</text><rect x="33.5" y="344.3" width="38" height="3" fill="#fff" opacity=".6"/><rect x="621" y="343.5" width="6" height="5" fill="#555" opacity=".6"/></svg></svg>
<div class="lbl" style="left:986px;top:414.2px">10</div>
<svg class="thumb" style="left:59px;top:460px" width="170" height="99" viewBox="-8 -11.20 680 396" font-family="Liberation Sans"><rect x="-1" y="0" width="668" height="378" fill="none" stroke="#fff" stroke-width="6" opacity=".26" filter="url(#b1)"/><svg x="0" y="0" width="664" height="373.6" viewBox="0 0 664 373.6" overflow="hidden"><rect width="664" height="373.6" fill="#fff"/><svg x="0" y="0" width="344" height="373.6" viewBox="0 0 344 373.6" overflow="hidden"><rect width="344" height="373.6" fill="#0f1a22"/><g filter="url(#bg1)"><rect x="0.0" y="0.0" width="344.0" height="373.6" fill="url(#g28)" /><g filter="url(#b8)" ><rect x="138.3" y="6.2" width="170.8" height="44.0" fill="#3d6272" opacity=".8"/></g><g filter="url(#b1)" ><rect x="148.3" y="20.2" width="150.8" height="10.1" fill="#e6f8fb" /></g><g filter="url(#b16)" ><ellipse cx="225.9" cy="70.8" rx="120.0" ry="40.0" fill="#2b4452" opacity=".8"/></g><rect x="183.7" y="93.3" width="70.3" height="137.8" fill="#111c24" /><rect x="273.7" y="96.1" width="73.1" height="126.6" fill="#0e1820" /><g filter="url(#b1)" ><rect x="147.2" y="118.6" width="14.0" height="14.0" fill="#5a3a2a" /></g><rect x="6.5" y="115.8" width="140.7" height="119.3" fill="#060a0e" /><rect x="24.5" y="131.6" width="108.6" height="88.3" fill="url(#g29)" /><g filter="url(#b2)" ><rect x="45.9" y="146.8" width="66.4" height="59.1" fill="#2b566e" /></g><g filter="url(#b1)" ><rect x="68.4" y="155.2" width="20.0" height="38.0" fill="#16303f" /></g><g filter="url(#b1)" ><ellipse cx="68.4" cy="240.7" rx="60.0" ry="8.0" fill="#060a0e" /></g><rect x="0.0" y="235.1" width="344.0" height="67.5" fill="url(#g30)" /><g filter="url(#b1)" ><polygon points="3.7,270.5 96.5,257.6 144.3,274.5 45.9,295.9" fill="#4d5c66" /></g><g filter="url(#b1)" ><polygon points="240.0,273.4 299.1,256.5 344.1,262.1 344.1,295.9 276.6,293.0" fill="#52616b" /></g><ellipse cx="189.9" cy="266.0" rx="45.0" ry="10.0" fill="#04080b" /><g filter="url(#b1)" ><rect x="211.9" y="231.2" width="62.0" height="20.0" fill="#5f6565" /></g><g filter="url(#b1)" ><rect x="214.7" y="228.3" width="50.0" height="6.0" fill="#8a8f8f" /></g><rect x="309.2" y="205.8" width="40.0" height="42.0" fill="#1a242c" /><rect x="0.0" y="302.6" width="344.0" height="373.6" fill="#04070a" /></g></svg><text stroke="#161616" stroke-width="1.1" stroke-linejoin="round" x="381.8" y="81.3" font-size="27.5" font-weight="bold" fill="#161616" text-anchor="start" textLength="86.0" lengthAdjust="spacingAndGlyphs">CLUE 5</text><text x="384.6" y="119.5" font-size="13.6" font-weight="bold" fill="#1d1d1d" text-anchor="start" textLength="177.0" lengthAdjust="spacingAndGlyphs" opacity="0.82" stroke="#1d1d1d" stroke-width="0.5">Jack, the night guard, said his</text><text x="384.6" y="140.3" font-size="13.6" font-weight="bold" fill="#1d1d1d" text-anchor="start" textLength="173.0" lengthAdjust="spacingAndGlyphs" opacity="0.82" stroke="#1d1d1d" stroke-width="0.5">flashlight disappeared during</text><text x="384.6" y="161.1" font-size="13.6" font-weight="bold" fill="#1d1d1d" text-anchor="start" textLength="45.6" lengthAdjust="spacingAndGlyphs" opacity="0.82" stroke="#1d1d1d" stroke-width="0.5">his shift.</text><text x="384.6" y="208.7" font-size="9.4" font-weight="normal" fill="#222" text-anchor="start" textLength="122.6" lengthAdjust="spacingAndGlyphs" opacity="0.62" stroke="#222" stroke-width="0.28">Do you believe Jack lost it?</text><text x="384.6" y="226.7" font-size="9.4" font-weight="normal" fill="#222" text-anchor="start" textLength="210.0" lengthAdjust="spacingAndGlyphs" opacity="0.62" stroke="#222" stroke-width="0.28">Could someone else have taken his flashlight?</text><rect x="33.5" y="344.3" width="38" height="3" fill="#fff" opacity=".6"/><rect x="621" y="343.5" width="6" height="5" fill="#555" opacity=".6"/></svg></svg>
<div class="lbl" style="left:114px;top:576.7px">11</div>
<svg class="thumb" style="left:277px;top:460px" width="170" height="99" viewBox="-8 -11.20 680 396" font-family="Liberation Sans"><rect x="-1" y="0" width="668" height="378" fill="none" stroke="#fff" stroke-width="6" opacity=".26" filter="url(#b1)"/><svg x="0" y="0" width="664" height="373.6" viewBox="0 0 664 373.6" overflow="hidden"><rect width="664" height="373.6" fill="#fff"/><svg x="0" y="0" width="344" height="373.6" viewBox="0 0 344 373.6" overflow="hidden"><rect width="344" height="373.6" fill="#505a62"/><g filter="url(#bg1)"><rect x="0.0" y="0.0" width="344.0" height="373.6" fill="url(#g31)" /><g filter="url(#b16)" ><rect x="0.0" y="149.6" width="344.0" height="120.0" fill="#3a434b" opacity=".55"/></g><rect x="54.3" y="8.9" width="77.1" height="106.9" fill="#1c232a" /><rect x="62.8" y="17.4" width="61.9" height="90.6" fill="#7b848b" /><g filter="url(#b1)" ><rect x="68.8" y="39.4" width="49.9" height="34.0" fill="#4a5660" /></g><rect x="-4.7" y="6.1" width="28.1" height="81.6" fill="#1a2128" /><rect x="-4.7" y="12.1" width="23.1" height="69.6" fill="#6a747c" /><rect x="285.0" y="19.1" width="50.6" height="88.3" fill="#0f151b" /><g filter="url(#b1)" ><rect x="297.0" y="33.1" width="26.6" height="58.3" fill="#2a2f32" /></g><rect x="265.3" y="183.3" width="63.0" height="188.5" fill="url(#g32)" /><rect x="328.3" y="115.8" width="40.0" height="373.6" fill="#1c232a" /><g filter="url(#b1)" ><ellipse cx="258.5" cy="113.0" rx="22.0" ry="30.0" fill="#11161a" /><rect x="285.0" y="132.7" width="28.0" height="62.0" fill="#3a2a22" /></g><rect x="-4.7" y="186.1" width="57.4" height="87.2" fill="#2a2322" /><rect x="-0.7" y="188.1" width="7.0" height="85.2" fill="#4e342a" /><rect x="9.3" y="188.1" width="7.0" height="85.2" fill="#1e1c1c" /><rect x="19.3" y="188.1" width="7.0" height="85.2" fill="#5a3c2e" /><rect x="29.3" y="188.1" width="7.0" height="85.2" fill="#2a2424" /><rect x="39.3" y="188.1" width="7.0" height="85.2" fill="#47302a" /><g filter="url(#b1)" ><rect x="68.4" y="236.8" width="85.0" height="30.0" fill="#585e64" /></g><rect x="0.0" y="272.2" width="158.4" height="373.6" fill="url(#g33)" /><path d="M-4.7 93.3 Q34.6 149.6 74.0 135.5 T186.5 93.3" fill="none" stroke="#2a1a14" stroke-width="25" /><path d="M-4.7 93.3 Q34.6 149.6 74.0 135.5 T186.5 93.3" fill="none" stroke="#9c3c1a" stroke-width="17" stroke-dasharray="8 6"/><g filter="url(#b1)" ><polygon points="142.7,166.5 169.7,145.1 200.6,131.6 234.4,131.6 265.3,149.6 282.2,183.3 292.3,245.2 310.3,329.6 299.1,346.5 268.1,340.9 268.1,371.8 147.2,371.8 152.8,273.4 147.2,245.2 96.5,228.3 85.3,208.7 96.5,197.4 144.3,211.5" fill="#13253a" /></g><g filter="url(#b4)" ><polygon points="152.8,172.1 209.0,138.3 220.3,217.1 169.7,245.2" fill="#1d3450" opacity=".6"/></g><g filter="url(#b4)" ><rect x="147.2" y="340.9" width="120.0" height="40.0" fill="#0c1824" /></g><polygon points="193.3,132.7 230.4,128.2 200.6,208.7" fill="#c29478" /><ellipse cx="213.5" cy="114.7" rx="14.0" ry="18.0" fill="#b98c72" /><ellipse cx="214.7" cy="92.2" rx="24.0" ry="30.0" fill="#cda088" /><path d="M178.1 96.1 Q175.3 39.9 214.7 39.9 T248.4 87.7 Q237.2 59.6 203.4 65.2 T178.1 96.1 Z" fill="#0c1014" /><g filter="url(#b1)" ><ellipse cx="76.8" cy="193.5" rx="24.0" ry="10.0" fill="#c79a80" /></g><g filter="url(#b1)" ><ellipse cx="315.9" cy="336.4" rx="24.0" ry="10.0" fill="#c09278" /></g><rect x="219.2" y="169.3" width="32" height="11" fill="#cfae74" transform="rotate(18 219.2 169.3)"/></g></svg><text stroke="#161616" stroke-width="1.1" stroke-linejoin="round" x="381.8" y="81.3" font-size="27.5" font-weight="bold" fill="#161616" text-anchor="start" textLength="86.0" lengthAdjust="spacingAndGlyphs">CLUE 6</text><text x="384.6" y="119.5" font-size="13.6" font-weight="bold" fill="#1d1d1d" text-anchor="start" textLength="221.0" lengthAdjust="spacingAndGlyphs" opacity="0.82" stroke="#1d1d1d" stroke-width="0.5">Mrs. Raven, the manager, told police</text><text x="384.6" y="140.3" font-size="13.6" font-weight="bold" fill="#1d1d1d" text-anchor="start" textLength="228.0" lengthAdjust="spacingAndGlyphs" opacity="0.82" stroke="#1d1d1d" stroke-width="0.5">that the ghost story helps the hotel get</text><text x="384.6" y="161.1" font-size="13.6" font-weight="bold" fill="#1d1d1d" text-anchor="start" textLength="184.5" lengthAdjust="spacingAndGlyphs" opacity="0.82" stroke="#1d1d1d" stroke-width="0.5">more guests during Halloween.</text><text x="384.6" y="208.7" font-size="9.4" font-weight="normal" fill="#222" text-anchor="start" textLength="198.6" lengthAdjust="spacingAndGlyphs" opacity="0.62" stroke="#222" stroke-width="0.28">Does Mrs. Raven know more than she says?</text><text x="384.6" y="226.7" font-size="9.4" font-weight="normal" fill="#222" text-anchor="start" textLength="207.0" lengthAdjust="spacingAndGlyphs" opacity="0.62" stroke="#222" stroke-width="0.28">Do you think she really believes in the ghost?</text><rect x="33.5" y="344.3" width="38" height="3" fill="#fff" opacity=".6"/><rect x="621" y="343.5" width="6" height="5" fill="#555" opacity=".6"/></svg></svg>
<div class="lbl" style="left:332px;top:576.7px">12</div>
<svg class="thumb" style="left:495px;top:460px" width="170" height="99" viewBox="-8 -11.20 680 396" font-family="Liberation Sans"><rect x="-1" y="0" width="668" height="378" fill="none" stroke="#fff" stroke-width="6" opacity=".26" filter="url(#b1)"/><svg x="0" y="0" width="664" height="373.6" viewBox="0 0 664 373.6" overflow="hidden"><rect width="664" height="373.6" fill="#fff"/><svg x="0" y="0" width="344" height="373.6" viewBox="0 0 344 373.6" overflow="hidden"><rect width="344" height="373.6" fill="#0e1a22"/><g filter="url(#bg1)"><rect x="0.0" y="0.0" width="344.0" height="373.6" fill="url(#g34)" /><rect x="296.2" y="0.0" width="344.0" height="373.6" fill="url(#g35)" /><rect x="29.0" y="0.0" width="169.7" height="373.6" fill="url(#g36)" /><ellipse cx="116.2" cy="43.8" rx="23.0" ry="21.0" fill="#2b3a44" /><ellipse cx="116.2" cy="43.8" rx="20.0" ry="18.0" fill="#0a1218" /><g filter="url(#b1)" ><rect x="195.0" y="113.0" width="31.0" height="25.0" fill="#2d3c46" /></g><g filter="url(#b8)" ><rect x="163.6" y="144.8" width="86.6" height="74.3" fill="#1f6a58" opacity=".45"/></g><rect x="155.6" y="146.8" width="50.6" height="70.3" fill="url(#g37)" rx="4"/><g filter="url(#b2)" ><rect x="181.1" y="158.4" width="23.4" height="38.6" fill="#6fe8bc" /></g><g filter="url(#b2)" ><rect x="186.1" y="168.4" width="12.4" height="14.6" fill="#c8ffe8" /></g><g filter="url(#b2)" ><polygon points="202.3,174.9 248.4,172.1 252.9,201.3 204.5,199.1" fill="#35c095" /></g><g filter="url(#b2)" ><polygon points="231.5,174.9 265.3,163.6 301.9,174.9 301.9,217.1 265.3,219.9 237.2,205.8" fill="#2a3436" /></g><g filter="url(#b2)" ><polygon points="231.5,177.7 265.3,169.3 265.3,186.1 237.2,197.4" fill="#3b9a80" opacity=".7"/></g><polygon points="299.1,177.7 346.9,169.3 346.9,242.4 315.9,245.2 299.1,219.9" fill="#05080b" /><g filter="url(#b1)" ><rect x="204.5" y="281.8" width="14.0" height="30.0" fill="#4a6272" /><ellipse cx="227.0" cy="301.5" rx="10.0" ry="10.0" fill="#3a5262" /></g></g></svg><text stroke="#161616" stroke-width="1.1" stroke-linejoin="round" x="381.8" y="81.3" font-size="27.5" font-weight="bold" fill="#161616" text-anchor="start" textLength="86.0" lengthAdjust="spacingAndGlyphs">CLUE 7</text><text x="384.6" y="119.5" font-size="13.6" font-weight="bold" fill="#1d1d1d" text-anchor="start" textLength="226.7" lengthAdjust="spacingAndGlyphs" opacity="0.82" stroke="#1d1d1d" stroke-width="0.5">A keycard was used to open Room 13</text><text x="384.6" y="140.3" font-size="13.6" font-weight="bold" fill="#1d1d1d" text-anchor="start" textLength="212.7" lengthAdjust="spacingAndGlyphs" opacity="0.82" stroke="#1d1d1d" stroke-width="0.5">at 11:40 p.m., but no staff said they</text><text x="384.6" y="161.1" font-size="13.6" font-weight="bold" fill="#1d1d1d" text-anchor="start" textLength="125.5" lengthAdjust="spacingAndGlyphs" opacity="0.82" stroke="#1d1d1d" stroke-width="0.5">were near that room.</text><text x="384.6" y="208.7" font-size="9.4" font-weight="normal" fill="#222" text-anchor="start" textLength="159.0" lengthAdjust="spacingAndGlyphs" opacity="0.62" stroke="#222" stroke-width="0.28">Who could have used the keycard?</text><text x="384.6" y="226.7" font-size="9.4" font-weight="normal" fill="#222" text-anchor="start" textLength="222.8" lengthAdjust="spacingAndGlyphs" opacity="0.62" stroke="#222" stroke-width="0.28">Why would they go into the Room 13 at that time?</text><rect x="33.5" y="344.3" width="38" height="3" fill="#fff" opacity=".6"/><rect x="621" y="343.5" width="6" height="5" fill="#555" opacity=".6"/></svg></svg>
<div class="lbl" style="left:550px;top:576.7px">13</div>
<svg class="thumb" style="left:713px;top:460px" width="170" height="99" viewBox="-8 -11.20 680 396" font-family="Liberation Sans"><rect x="-1" y="0" width="668" height="378" fill="none" stroke="#fff" stroke-width="6" opacity=".26" filter="url(#b1)"/><svg x="0" y="0" width="664" height="373.6" viewBox="0 0 664 373.6" overflow="hidden"><rect width="664" height="373.6" fill="#fff"/><svg x="0" y="0" width="344" height="373.6" viewBox="0 0 344 373.6" overflow="hidden"><rect width="344" height="373.6" fill="#101920"/><g filter="url(#bg1)"><rect x="0.0" y="0.0" width="344.0" height="373.6" fill="#101920" /><polygon points="-4.7,-2.3 169.7,-2.3 -4.7,93.3" fill="url(#g38)" /><g filter="url(#b2)" ><ellipse cx="31.8" cy="73.6" rx="28.0" ry="14.0" fill="#93a3ad" /></g><polygon points="152.8,144.0 346.9,65.2 346.9,166.5 152.8,166.5" fill="url(#g39)" /><g filter="url(#b2)" ><polygon points="169.7,135.5 346.9,113.0 346.9,128.2 169.7,149.6" fill="#1a242b" /></g><g filter="url(#b1)" ><polygon points="-4.7,174.9 152.8,149.6 152.8,166.5 -4.7,186.1" fill="#2c3a44" /></g><rect x="0.0" y="166.5" width="344.0" height="24.0" fill="#0e151a" /><rect x="0.0" y="190.1" width="344.0" height="52.3" fill="url(#g40)" /><g filter="url(#b1)" ><rect x="234.4" y="197.4" width="18.0" height="66.0" fill="#7f8a90" /><rect x="262.5" y="197.4" width="34.0" height="66.0" fill="#76828a" /></g><rect x="0.0" y="239.6" width="344.0" height="32.0" fill="url(#g41)" /><rect x="0.0" y="264.9" width="344.0" height="373.6" fill="url(#g42)" /><g filter="url(#b8)" ><polygon points="152.8,264.9 346.9,264.9 346.9,371.8 220.3,371.8" fill="#141c23" opacity=".75"/></g><g filter="url(#b4)" ><ellipse cx="62.8" cy="276.2" rx="60.0" ry="10.0" fill="#8797a1" opacity=".7"/></g><polygon points="-4.7,84.9 158.4,-3.4 346.9,-3.4 346.9,39.9 -4.7,158.0" fill="url(#g43)" /><clipPath id="c14"><polygon points="-4.7,84.9 158.4,-3.4 346.9,-3.4 346.9,39.9 -4.7,158.0"/></clipPath><g clip-path="url(#c14)"><g filter="url(#b2)" ><ellipse cx="51.5" cy="93.3" rx="13.0" ry="10.0" fill="#4a525c" /><ellipse cx="96.5" cy="76.4" rx="13.0" ry="10.0" fill="#dcdede" /><ellipse cx="130.3" cy="65.2" rx="13.0" ry="10.0" fill="#3a3f48" /><ellipse cx="169.7" cy="42.7" rx="13.0" ry="10.0" fill="#d8d8d2" /><ellipse cx="203.4" cy="34.2" rx="13.0" ry="10.0" fill="#4a3a34" /><ellipse cx="237.2" cy="23.0" rx="13.0" ry="10.0" fill="#c8c5bd" /><ellipse cx="276.6" cy="14.6" rx="13.0" ry="10.0" fill="#5a3e32" /><ellipse cx="315.9" cy="20.2" rx="13.0" ry="10.0" fill="#bdb8b0" /><ellipse cx="23.4" cy="121.5" rx="13.0" ry="10.0" fill="#e0e3e5" /><ellipse cx="74.0" cy="110.2" rx="13.0" ry="10.0" fill="#6a727a" /><ellipse cx="254.0" cy="48.3" rx="13.0" ry="10.0" fill="#34363c" /><ellipse cx="299.1" cy="42.7" rx="13.0" ry="10.0" fill="#2c2e34" /><ellipse cx="152.8" cy="87.7" rx="13.0" ry="10.0" fill="#40464e" /><ellipse cx="6.5" cy="144.0" rx="13.0" ry="10.0" fill="#c8ccd0" /><ellipse cx="119.0" cy="101.8" rx="13.0" ry="10.0" fill="#d0d0cc" /><ellipse cx="220.3" cy="59.6" rx="13.0" ry="10.0" fill="#3a3c42" /><ellipse cx="332.8" cy="6.1" rx="13.0" ry="10.0" fill="#4a4038" /></g></g><polygon points="-4.7,156.3 346.9,38.2 346.9,76.4 -4.7,176.6" fill="url(#g44)" /><g filter="url(#b1)" ><polygon points="-4.7,157.5 346.9,39.3 346.9,44.9 -4.7,163.1" fill="#5f7f94" /></g><rect x="138.7" y="132.7" width="20.8" height="147.4" fill="url(#g45)" /><g filter="url(#b2)" ><ellipse cx="166.8" cy="183.3" rx="8.0" ry="22.0" fill="#3a4c5a" /></g><rect x="0.0" y="0.0" width="344.0" height="373.6" fill="#060d13" opacity=".12"/><g filter="url(#b2)" ><ellipse cx="131.5" cy="285.9" rx="26.0" ry="6.0" fill="#c8d0d6" opacity=".7"/><ellipse cx="89.5" cy="277.9" rx="10.0" ry="4.0" fill="#c0c8ce" opacity=".7"/></g><g filter="url(#b2)" ><path d="M173.5 236.7 q-8 -30 -2 -50 t-6 -45" fill="none" stroke="#8fa0aa" stroke-width="4" opacity=".7"/></g><rect x="159.5" y="240.7" width="38.3" height="55.1" fill="url(#g46)" rx="3"/><g filter="url(#b1)" ><ellipse cx="178.7" cy="237.7" rx="6.0" ry="5.0" fill="#ffb060" /></g></g></svg><text stroke="#161616" stroke-width="1.1" stroke-linejoin="round" x="381.8" y="81.3" font-size="27.5" font-weight="bold" fill="#161616" text-anchor="start" textLength="86.0" lengthAdjust="spacingAndGlyphs">CLUE 8</text><text x="384.6" y="119.5" font-size="13.6" font-weight="bold" fill="#1d1d1d" text-anchor="start" textLength="197.5" lengthAdjust="spacingAndGlyphs" opacity="0.82" stroke="#1d1d1d" stroke-width="0.5">Under the bed in Room 13, there</text><text x="384.6" y="140.3" font-size="13.6" font-weight="bold" fill="#1d1d1d" text-anchor="start" textLength="208.7" lengthAdjust="spacingAndGlyphs" opacity="0.82" stroke="#1d1d1d" stroke-width="0.5">was a candle that was still warm in</text><text x="384.6" y="161.1" font-size="13.6" font-weight="bold" fill="#1d1d1d" text-anchor="start" textLength="73.7" lengthAdjust="spacingAndGlyphs" opacity="0.82" stroke="#1d1d1d" stroke-width="0.5">the morning.</text><text x="384.6" y="208.7" font-size="9.4" font-weight="normal" fill="#222" text-anchor="start" textLength="180.6" lengthAdjust="spacingAndGlyphs" opacity="0.62" stroke="#222" stroke-width="0.28">Why do you think someone lit a candle?</text><text x="384.6" y="226.7" font-size="9.4" font-weight="normal" fill="#222" text-anchor="start" textLength="162.0" lengthAdjust="spacingAndGlyphs" opacity="0.62" stroke="#222" stroke-width="0.28">What could the candle be used for?</text><rect x="33.5" y="344.3" width="38" height="3" fill="#fff" opacity=".6"/><rect x="621" y="343.5" width="6" height="5" fill="#555" opacity=".6"/></svg></svg>
<div class="lbl" style="left:768px;top:576.7px">14</div>
<svg class="thumb" style="left:931px;top:460px" width="170" height="99" viewBox="-8 -11.20 680 396" font-family="Liberation Sans"><rect x="-1" y="0" width="668" height="378" fill="none" stroke="#fff" stroke-width="6" opacity=".26" filter="url(#b1)"/><svg x="0" y="0" width="664" height="373.6" viewBox="0 0 664 373.6" overflow="hidden"><rect width="664" height="373.6" fill="#fff"/><svg x="0" y="0" width="344" height="373.6" viewBox="0 0 344 373.6" overflow="hidden"><rect width="344" height="373.6" fill="#1b3542"/><g filter="url(#bg1)"><rect x="0.0" y="0.0" width="344.0" height="373.6" fill="url(#g47)" /><rect x="0.0" y="228.3" width="344.0" height="373.6" fill="url(#g48)" /><g filter="url(#b4)" ><polygon points="-4.7,132.7 74.0,144.0 51.5,239.6 -4.7,245.2" fill="#08121a" /></g><g filter="url(#b8)" ><ellipse cx="169.7" cy="346.5" rx="110.0" ry="28.0" fill="#3a5666" opacity=".8"/></g><g filter="url(#b1)" ><rect x="88.1" y="113.0" width="28.0" height="8.0" fill="#7a8a94" /></g><polygon points="182.0,7.8 349.7,37.1 349.7,169.3 142.7,122.6" fill="#0c1318" /><polygon points="191.0,21.3 349.7,49.4 349.7,156.3 159.5,115.8" fill="url(#g49)" /><g filter="url(#b2)" ><line x1="197.8" y1="48.3" x2="344.1" y2="73.6" stroke="#8696a6" stroke-width="3" /><line x1="180.9" y1="93.3" x2="344.1" y2="127.1" stroke="#48586a" stroke-width="3" /></g><polygon points="47.0,178.8 144.3,122.6 349.7,165.3 327.2,231.2 307.5,309.9 47.0,231.2" fill="#15110f" /><polygon points="68.4,174.9 147.2,131.6 332.8,172.1 299.1,234.0" fill="#14345a" /><g filter="url(#b1)" ><polygon points="116.2,141.1 152.8,128.2 183.7,141.1 178.1,160.8 124.7,158.0" fill="#cfcfc6" /></g><g filter="url(#b1)" ><polygon points="74.0,171.0 119.0,154.1 138.7,166.5 121.8,183.3 85.3,184.5" fill="#aab2b2" /></g><g filter="url(#b1)" ><polygon points="130.3,197.4 158.4,183.3 220.3,205.8 209.0,225.5 147.2,217.1" fill="#b4c2cc" /></g><polygon points="162.9,171.0 231.5,172.1 234.4,199.1 159.5,201.3" fill="#222a32" /><polygon points="166.8,174.9 228.7,176.0 230.4,195.7 164.0,197.4" fill="#cdd3d8" /><g filter="url(#b1)" ><ellipse cx="270.9" cy="194.6" rx="24.0" ry="30.0" fill="#252b32" /></g><g filter="url(#b2)" ><polygon points="287.8,172.1 313.1,169.3 307.5,205.8 290.6,211.5" fill="#4a80b0" /></g><polygon points="47.0,178.8 299.1,240.7 307.5,309.9 47.0,231.2" fill="url(#g50)" /><g filter="url(#b1)" ><rect x="192.2" y="248.0" width="38.0" height="36.0" fill="#1d3a5c" /></g><line x1="90.9" y1="262.1" x2="60.0" y2="346.5" stroke="#5a3a26" stroke-width="7" /><line x1="74.0" y1="329.6" x2="152.8" y2="369.0" stroke="#5a3a26" stroke-width="7" /><line x1="324.4" y1="222.7" x2="287.8" y2="371.8" stroke="#3f2a1c" stroke-width="7" /><line x1="96.5" y1="264.9" x2="169.7" y2="262.1" stroke="#5a3a26" stroke-width="7" /><g filter="url(#b2)" ><line x1="130.3" y1="273.4" x2="152.8" y2="340.9" stroke="#1c2c38" stroke-width="7" /></g><rect x="0.0" y="0.0" width="344.0" height="373.6" fill="url(#g51)" /><rect x="0.0" y="0.0" width="344.0" height="373.6" fill="#050d14" opacity=".2"/></g></svg><text stroke="#161616" stroke-width="1.1" stroke-linejoin="round" x="381.8" y="81.3" font-size="27.5" font-weight="bold" fill="#161616" text-anchor="start" textLength="86.0" lengthAdjust="spacingAndGlyphs">CLUE 9</text><text x="384.6" y="119.5" font-size="13.6" font-weight="bold" fill="#1d1d1d" text-anchor="start" textLength="239.0" lengthAdjust="spacingAndGlyphs" opacity="0.82" stroke="#1d1d1d" stroke-width="0.5">A small box of candles was found in the</text><text x="384.6" y="140.3" font-size="13.6" font-weight="bold" fill="#1d1d1d" text-anchor="start" textLength="249.0" lengthAdjust="spacingAndGlyphs" opacity="0.82" stroke="#1d1d1d" stroke-width="0.5">suitcase of Nina, the guest from Room 14.</text><text x="384.6" y="161.1" font-size="13.6" font-weight="bold" fill="#1d1d1d" text-anchor="start" textLength="218.0" lengthAdjust="spacingAndGlyphs" opacity="0.82" stroke="#1d1d1d" stroke-width="0.5">She said they were "for meditation."</text><text x="384.6" y="208.7" font-size="9.4" font-weight="normal" fill="#222" text-anchor="start" textLength="159.0" lengthAdjust="spacingAndGlyphs" opacity="0.62" stroke="#222" stroke-width="0.28">Do you believe Nina's explanation?</text><text x="384.6" y="226.7" font-size="9.4" font-weight="normal" fill="#222" text-anchor="start" textLength="162.0" lengthAdjust="spacingAndGlyphs" opacity="0.62" stroke="#222" stroke-width="0.28">Why would she travel with candles?</text><rect x="33.5" y="344.3" width="38" height="3" fill="#fff" opacity=".6"/><rect x="621" y="343.5" width="6" height="5" fill="#555" opacity=".6"/></svg></svg>
<div class="lbl" style="left:986px;top:576.7px">15</div>
<svg class="thumb" style="left:59px;top:623px" width="170" height="99" viewBox="-8 -8.80 680 396" font-family="Liberation Sans"><rect x="-1" y="0" width="668" height="378" fill="none" stroke="#fff" stroke-width="6" opacity=".26" filter="url(#b1)"/><svg x="0" y="0" width="664" height="373.6" viewBox="0 0 664 373.6" overflow="hidden"><rect width="664" height="373.6" fill="#fff"/><svg x="0" y="0" width="344" height="373.6" viewBox="0 0 344 373.6" overflow="hidden"><rect width="344" height="373.6" fill="#101a22"/><g filter="url(#bg1)"><rect x="0.0" y="0.0" width="344.0" height="373.6" fill="url(#g52)" /><rect x="-4.7" y="17.0" width="125.5" height="154.7" fill="#0b1117" /><rect x="-4.7" y="84.5" width="50.6" height="9.1" fill="#6a747c" /><rect x="-4.7" y="93.6" width="50.6" height="9.1" fill="#a5acb2" /><rect x="-4.7" y="102.8" width="50.6" height="9.1" fill="#58626a" /><rect x="-4.7" y="111.9" width="50.6" height="9.1" fill="#949ca2" /><rect x="-4.7" y="121.0" width="50.6" height="9.1" fill="#6a747c" /><rect x="-4.7" y="130.2" width="50.6" height="9.1" fill="#a5acb2" /><rect x="-4.7" y="139.3" width="50.6" height="9.1" fill="#58626a" /><rect x="-4.7" y="148.5" width="50.6" height="9.1" fill="#949ca2" /><g filter="url(#b1)" ><rect x="54.3" y="107.0" width="28.0" height="50.0" fill="#3a4650" /></g><g filter="url(#b16)" ><ellipse cx="209.0" cy="95.7" rx="60.0" ry="70.0" fill="#394853" opacity=".9"/></g><rect x="155.6" y="50.7" width="22.0" height="58.0" fill="#141b22" /><rect x="260.8" y="17.0" width="86.1" height="233.5" fill="#0d151c" /><rect x="295.1" y="70.4" width="23.6" height="32.1" fill="#707d89" /><g filter="url(#b1)" ><polygon points="96.5,117.1 147.2,111.5 189.3,116.0 186.5,125.0 102.1,126.1" fill="#7a848a" /></g><g filter="url(#b1)" ><polygon points="96.5,129.5 147.2,123.9 189.3,128.4 186.5,137.4 102.1,138.5" fill="#626c73" /></g><g filter="url(#b1)" ><polygon points="96.5,141.9 147.2,136.2 189.3,140.7 186.5,149.7 102.1,150.9" fill="#727c82" /></g><rect x="68.4" y="143.5" width="16.0" height="50.0" fill="#7a848a" /><g filter="url(#b1)" ><rect x="116.2" y="163.2" width="30.0" height="26.0" fill="#8a9398" /></g><g filter="url(#b1)" ><rect x="124.7" y="167.7" width="14.0" height="12.0" fill="#4a5258" /></g><polygon points="-4.7,180.1 254.0,177.3 254.0,192.5 -4.7,215.0" fill="#33414b" /><g filter="url(#b1)" ><polygon points="0.9,188.5 90.9,182.9 105.0,197.0 6.5,207.1" fill="#626c74" /><polygon points="147.2,177.3 214.7,179.0 217.5,186.9 152.8,186.9" fill="#58626a" /></g><polygon points="99.3,199.8 259.7,192.5 259.7,239.2 169.7,230.7 99.3,213.9" fill="#121b23" /><polygon points="287.8,247.6 346.9,247.6 346.9,374.2 276.6,374.2" fill="#15212a" /><polygon points="-4.7,215.0 152.8,212.7 297.4,257.2 17.8,374.2 -4.7,374.2" fill="url(#g53)" /><polygon points="297.4,257.2 290.6,374.2 17.8,374.2" fill="#0a1118" /><g filter="url(#b4)" ><polygon points="-4.7,320.8 124.7,298.3 17.8,374.2 -4.7,374.2" fill="#1a252e" opacity=".8"/></g><g filter="url(#b1)" ><ellipse cx="99.3" cy="273.5" rx="9.0" ry="5.0" fill="#e2e6e8" /></g><g filter="url(#b1)" ><ellipse cx="161.8" cy="267.3" rx="26.0" ry="9.0" fill="#dfe3e6" /></g><rect x="153.9" y="242.0" width="13.0" height="22.0" fill="#4a3a2c" /><g ><ellipse cx="160.7" cy="239.2" rx="4.0" ry="5.0" fill="#2a2018" /></g></g></svg><text stroke="#161616" stroke-width="1.1" stroke-linejoin="round" x="381.8" y="81.3" font-size="27.5" font-weight="bold" fill="#161616" text-anchor="start" textLength="104.0" lengthAdjust="spacingAndGlyphs">CLUE 10</text><text x="384.6" y="119.5" font-size="13.6" font-weight="bold" fill="#1d1d1d" text-anchor="start" textLength="216.6" lengthAdjust="spacingAndGlyphs" opacity="0.82" stroke="#1d1d1d" stroke-width="0.5">Someone noticed candle wax on the</text><text x="384.6" y="140.3" font-size="13.6" font-weight="bold" fill="#1d1d1d" text-anchor="start" textLength="221.0" lengthAdjust="spacingAndGlyphs" opacity="0.82" stroke="#1d1d1d" stroke-width="0.5">security desk. Jack laughed and said,</text><text x="384.6" y="161.1" font-size="13.6" font-weight="bold" fill="#1d1d1d" text-anchor="start" textLength="176.0" lengthAdjust="spacingAndGlyphs" opacity="0.82" stroke="#1d1d1d" stroke-width="0.5">"Maybe the ghost sat there!"</text><text x="384.6" y="208.7" font-size="9.4" font-weight="normal" fill="#222" text-anchor="start" textLength="218.0" lengthAdjust="spacingAndGlyphs" opacity="0.62" stroke="#222" stroke-width="0.28">Why would there be candle wax on Jack's desk?</text><text x="384.6" y="226.7" font-size="9.4" font-weight="normal" fill="#222" text-anchor="start" textLength="229.5" lengthAdjust="spacingAndGlyphs" opacity="0.62" stroke="#222" stroke-width="0.28">Do you think Jack was joking or hiding something?</text><rect x="33.5" y="344.3" width="38" height="3" fill="#fff" opacity=".6"/><rect x="621" y="343.5" width="6" height="5" fill="#555" opacity=".6"/></svg></svg>
<div class="lbl" style="left:114px;top:739.1px">16</div>
<svg class="thumb" style="left:277px;top:623px" width="170" height="99" viewBox="-8 -8.80 680 396" font-family="Liberation Sans"><rect x="-1" y="0" width="668" height="378" fill="none" stroke="#fff" stroke-width="6" opacity=".26" filter="url(#b1)"/><svg x="0" y="0" width="664" height="373.6" viewBox="0 0 664 373.6" overflow="hidden"><rect width="664" height="373.6" fill="#fff"/><rect x="34.6" y="0" width="100.2" height="98.8" fill="#fdd47b"/><text stroke="#161616" stroke-width="1.1" stroke-linejoin="round" x="69.5" y="71.5" font-size="28" font-weight="bold" fill="#161616" text-anchor="start" textLength="174.4" lengthAdjust="spacingAndGlyphs">WHO DID IT?</text><text x="339.6" y="56.2" font-size="12.4" font-weight="bold" fill="#222" text-anchor="start" textLength="275.7" lengthAdjust="spacingAndGlyphs" opacity="0.8" stroke="#222" stroke-width="0.5">So, what's your theory? What do you think actually</text><text x="339.6" y="73.6" font-size="12.4" font-weight="bold" fill="#222" text-anchor="start" textLength="255.0" lengthAdjust="spacingAndGlyphs" opacity="0.8" stroke="#222" stroke-width="0.5">happened at the motel, and who was behind it?</text><svg x="66.0" y="149.0" width="76.6" height="97.5" viewBox="0 0 76.6 97.5" overflow="hidden"><g filter="url(#b1)"><rect x="0.0" y="0.0" width="76.6" height="97.5" fill="#20130f" /><g filter="url(#b2)" ><rect x="38.3" y="11.7" width="38.3" height="9.8" fill="#5a4a42" /><rect x="38.3" y="29.2" width="38.3" height="7.8" fill="#4a3a34" /><rect x="0.0" y="9.8" width="23.0" height="29.2" fill="#2e1e18" /></g><rect x="0.0" y="79.9" width="76.6" height="17.6" fill="#2c140d" /><rect x="0.0" y="76.0" width="76.6" height="6.8" fill="#74401f" /><ellipse cx="36.0" cy="56.5" rx="23.0" ry="21.4" fill="#12141a" /><ellipse cx="35.2" cy="26.3" rx="7.7" ry="9.8" fill="#120d0b" /><ellipse cx="36.0" cy="29.2" rx="5.0" ry="7.8" fill="#b08a74" /><polygon points="33.7,39.0 39.1,39.0 36.4,48.8" fill="#9a7560" /></g><rect width="76.6" height="97.5" fill="none" stroke="#1a1210" stroke-width="2.5" opacity=".55"/></svg><text x="104.3" y="262.9" font-size="11.2" font-weight="bold" fill="#111" text-anchor="middle" textLength="52.0" lengthAdjust="spacingAndGlyphs" stroke="#111" stroke-width="0.5">Mrs. Raven</text><text x="104.3" y="278.7" font-size="11.2" font-weight="normal" fill="#333" text-anchor="middle" textLength="40.0" lengthAdjust="spacingAndGlyphs" opacity="0.7" stroke="#333" stroke-width="0.38">Manager</text><svg x="178.5" y="149.0" width="76.6" height="97.5" viewBox="0 0 76.6 97.5" overflow="hidden"><g filter="url(#b1)"><rect x="0.0" y="0.0" width="76.6" height="97.5" fill="#14231f" /><g filter="url(#b2)" ><ellipse cx="16.9" cy="11.7" rx="10.0" ry="4.9" fill="#c8e0e0" /><rect x="3.8" y="19.5" width="38.3" height="53.6" fill="#2b4a48" /><rect x="39.8" y="24.4" width="15.3" height="58.5" fill="#4a5a4c" /></g><rect x="58.2" y="0.0" width="18.4" height="97.5" fill="#241a12" /><rect x="0.0" y="0.0" width="4.6" height="97.5" fill="#0b1210" /><g filter="url(#b2)" ><polygon points="34.5,83.8 76.6,78.0 76.6,97.5 23.0,97.5" fill="#7a6124" /><rect x="0.0" y="85.8" width="30.6" height="11.7" fill="#1d2a1f" /></g><ellipse cx="32.2" cy="37.0" rx="6.9" ry="12.7" fill="#5b87a0" /><rect x="26.8" y="46.8" width="10.0" height="37.0" fill="#0e1418" /><ellipse cx="32.9" cy="18.5" rx="3.8" ry="5.8" fill="#2a1e18" /></g><rect width="76.6" height="97.5" fill="none" stroke="#1a1210" stroke-width="2.5" opacity=".55"/></svg><text x="216.8" y="262.9" font-size="11.2" font-weight="bold" fill="#111" text-anchor="middle" textLength="24.0" lengthAdjust="spacingAndGlyphs" stroke="#111" stroke-width="0.5">Emily</text><text x="216.8" y="278.7" font-size="11.2" font-weight="normal" fill="#333" text-anchor="middle" textLength="36.0" lengthAdjust="spacingAndGlyphs" opacity="0.7" stroke="#333" stroke-width="0.38">Cleaner</text><svg x="291.0" y="149.0" width="76.6" height="97.5" viewBox="0 0 76.6 97.5" overflow="hidden"><g filter="url(#b1)"><rect x="0.0" y="0.0" width="76.6" height="97.5" fill="#3b444e" /><g filter="url(#b2)" ><ellipse cx="9.2" cy="40.9" rx="9.2" ry="7.8" fill="#9ab4c8" /><ellipse cx="67.4" cy="37.0" rx="7.7" ry="6.8" fill="#c8b08a" /><rect x="0.0" y="0.0" width="76.6" height="21.4" fill="#20262e" /><rect x="53.6" y="43.9" width="23.0" height="14.6" fill="#9a3a30" /></g><ellipse cx="38.3" cy="87.8" rx="38.3" ry="33.2" fill="#55181f" /><polygon points="29.1,54.6 47.5,54.6 38.3,79.9" fill="#7d858a" /><g filter="url(#b1)" ><line x1="9.2" y1="68.2" x2="21.4" y2="97.5" stroke="#12090b" stroke-width="5" /><line x1="55.2" y1="63.4" x2="68.9" y2="97.5" stroke="#12090b" stroke-width="5" /><line x1="3.8" y1="83.8" x2="72.8" y2="78.0" stroke="#1a0c10" stroke-width="5" /><line x1="23.0" y1="60.5" x2="16.9" y2="97.5" stroke="#7a2a32" stroke-width="3" /></g><ellipse cx="37.5" cy="37.0" rx="7.7" ry="11.7" fill="#9a7560" /><ellipse cx="37.5" cy="25.4" rx="9.2" ry="6.8" fill="#1c2024" /><ellipse cx="37.5" cy="44.9" rx="6.1" ry="4.9" fill="#33251f" /></g><rect width="76.6" height="97.5" fill="none" stroke="#1a1210" stroke-width="2.5" opacity=".55"/></svg><text x="329.3" y="262.9" font-size="11.2" font-weight="bold" fill="#111" text-anchor="middle" textLength="48.0" lengthAdjust="spacingAndGlyphs" stroke="#111" stroke-width="0.5">Mr. Green</text><text x="329.3" y="278.7" font-size="11.2" font-weight="normal" fill="#333" text-anchor="middle" textLength="80.0" lengthAdjust="spacingAndGlyphs" opacity="0.7" stroke="#333" stroke-width="0.38">Guest in Room 12</text><svg x="403.5" y="149.0" width="76.6" height="97.5" viewBox="0 0 76.6 97.5" overflow="hidden"><g filter="url(#b1)"><rect x="0.0" y="0.0" width="76.6" height="97.5" fill="#251a14" /><g filter="url(#b2)" ><rect x="56.7" y="26.3" width="18.4" height="19.5" fill="#88aed0" /><rect x="47.5" y="0.0" width="29.1" height="17.6" fill="#4a3a2c" /><rect x="61.3" y="4.9" width="15.3" height="11.7" fill="#a0b8c8" /></g><ellipse cx="29.1" cy="72.2" rx="32.2" ry="39.0" fill="#121419" /><ellipse cx="30.6" cy="22.4" rx="8.4" ry="11.7" fill="#6e5040" /><ellipse cx="30.6" cy="14.6" rx="8.4" ry="5.8" fill="#140f0c" /><g filter="url(#b1)" ><ellipse cx="56.7" cy="58.5" rx="10.7" ry="4.9" fill="#7a5c4c" /></g></g><rect width="76.6" height="97.5" fill="none" stroke="#1a1210" stroke-width="2.5" opacity=".55"/></svg><text x="441.8" y="262.9" font-size="11.2" font-weight="bold" fill="#111" text-anchor="middle" textLength="20.0" lengthAdjust="spacingAndGlyphs" stroke="#111" stroke-width="0.5">Jack</text><text x="441.8" y="278.7" font-size="11.2" font-weight="normal" fill="#333" text-anchor="middle" textLength="54.0" lengthAdjust="spacingAndGlyphs" opacity="0.7" stroke="#333" stroke-width="0.38">Night guard</text><svg x="516.0" y="149.0" width="76.6" height="97.5" viewBox="0 0 76.6 97.5" overflow="hidden"><g filter="url(#b1)"><rect x="0.0" y="0.0" width="76.6" height="97.5" fill="#6a4c30" /><g filter="url(#b2)" ><ellipse cx="38.3" cy="9.8" rx="13.0" ry="13.7" fill="#f0d8a8" /><rect x="24.5" y="9.8" width="30.6" height="73.1" fill="#8c6c46" /></g><rect x="0.0" y="0.0" width="23.0" height="97.5" fill="#553a24" /><rect x="61.3" y="0.0" width="15.3" height="97.5" fill="#452e1c" /><ellipse cx="39.8" cy="31.2" rx="7.7" ry="14.6" fill="#1c1410" /><ellipse cx="39.8" cy="27.3" rx="3.4" ry="5.4" fill="#9a755c" /><ellipse cx="39.8" cy="53.6" rx="10.0" ry="15.6" fill="#8a8272" /><rect x="32.2" y="64.4" width="16.9" height="29.2" fill="#2a1e18" /><rect x="0.0" y="90.7" width="76.6" height="6.8" fill="#2e1e12" /></g><rect width="76.6" height="97.5" fill="none" stroke="#1a1210" stroke-width="2.5" opacity=".55"/></svg><text x="554.3" y="262.9" font-size="11.2" font-weight="bold" fill="#111" text-anchor="middle" textLength="54.0" lengthAdjust="spacingAndGlyphs" stroke="#111" stroke-width="0.5">Nina Lopez</text><text x="554.3" y="278.7" font-size="11.2" font-weight="normal" fill="#333" text-anchor="middle" textLength="80.0" lengthAdjust="spacingAndGlyphs" opacity="0.7" stroke="#333" stroke-width="0.38">Guest in Room 14</text><rect x="33.5" y="344.3" width="38" height="3" fill="#222" opacity=".6"/><rect x="621" y="343.5" width="6" height="5" fill="#555" opacity=".6"/></svg></svg>
<div class="lbl" style="left:332px;top:739.1px">17</div>
<svg class="thumb" style="left:495px;top:623px" width="170" height="99" viewBox="-8 -8.80 680 396" font-family="Liberation Sans"><rect x="-1" y="0" width="668" height="378" fill="none" stroke="#fff" stroke-width="6" opacity=".26" filter="url(#b1)"/><svg x="0" y="0" width="664" height="373.6" viewBox="0 0 664 373.6" overflow="hidden"><rect width="664" height="373.6" fill="#fff"/><svg x="407" y="0" width="257" height="373.6" viewBox="0 0 257 373.6" overflow="hidden"><rect width="257" height="373.6" fill="#44555a"/><g filter="url(#bg1)"><rect x="0.0" y="0.0" width="257.0" height="373.6" fill="url(#g54)" /><g filter="url(#b16)" ><ellipse cx="173.4" cy="129.5" rx="90.0" ry="120.0" fill="#515f64" opacity=".7"/></g><rect x="0.0" y="0.0" width="257.0" height="373.6" fill="url(#g55)" /><rect x="-3.9" y="199.8" width="82.7" height="101.3" fill="#1a2326" /><rect x="-3.9" y="199.8" width="82.7" height="8.0" fill="#465256" /><g filter="url(#b2)" ><rect x="-3.9" y="298.3" width="85.0" height="40.0" fill="#1d272b" /></g><rect x="-3.9" y="134.0" width="37.7" height="52.9" fill="#1a2226" /><rect x="0.1" y="138.0" width="29.7" height="42.9" fill="#7a95a8" /><rect x="38.3" y="129.5" width="57.4" height="55.1" fill="#1a2226" /><rect x="42.3" y="133.5" width="49.4" height="45.1" fill="#88a3b6" /><rect x="54.1" y="93.5" width="39.4" height="31.5" fill="#1a2226" /><rect x="58.1" y="97.5" width="31.4" height="21.5" fill="#8aa2b4" /><rect x="99.1" y="132.9" width="28.1" height="20.3" fill="#1a2226" /><rect x="103.1" y="136.9" width="20.1" height="10.3" fill="#6c879a" /><path d="M17.0 130.6 L45.1 80.0 L72.1 89.0" fill="none" stroke="#12181b" stroke-width="3.5"/><ellipse cx="62.0" cy="80.0" rx="12.0" ry="7.0" fill="#12181b" /><rect x="119.9" y="266.2" width="44.0" height="10.0" fill="#8c816c" /><rect x="136.8" y="275.8" width="8.0" height="70.0" fill="#1a2023" /><g filter="url(#b1)" ><ellipse cx="139.6" cy="320.8" rx="40.0" ry="8.0" fill="#141a1d" /></g><g filter="url(#b1)" ><polygon points="77.7,242.0 204.3,242.0 207.1,287.0 201.5,343.3 164.9,343.3 164.9,275.8 139.6,264.5 117.1,275.8 116.0,343.3 79.4,343.3 74.9,287.0" fill="#0f1926" /><polygon points="86.2,152.0 117.1,139.6 167.7,139.6 198.7,152.0 207.1,197.0 202.6,242.0 77.7,242.0 76.6,197.0" fill="#17293c" /></g><g filter="url(#b4)" ><ellipse cx="141.3" cy="174.5" rx="36.0" ry="44.0" fill="#1c3048" opacity=".55"/></g><ellipse cx="98.0" cy="234.1" rx="12.0" ry="9.0" fill="#b08c74" /><ellipse cx="182.4" cy="234.1" rx="12.0" ry="9.0" fill="#b08c74" /><ellipse cx="141.3" cy="122.7" rx="16.0" ry="20.0" fill="#a98670" /><ellipse cx="141.3" cy="110.3" rx="17.0" ry="10.0" fill="#3a3836" /><ellipse cx="141.3" cy="132.9" rx="12.0" ry="8.0" fill="#5a4a40" /><ellipse cx="163.8" cy="164.4" rx="4.0" ry="4.5" fill="#d8c8a0" /><g filter="url(#b1)" ><ellipse cx="97.4" cy="357.3" rx="22.0" ry="14.0" fill="#07090b" /><ellipse cx="183.5" cy="357.3" rx="22.0" ry="14.0" fill="#07090b" /></g><rect x="0.0" y="0.0" width="257.0" height="373.6" fill="url(#g56)" /></g></svg><rect x="35" y="0" width="100" height="99" fill="#fdd47b"/><text stroke="#161616" stroke-width="1.1" stroke-linejoin="round" x="69.5" y="71.5" font-size="28" font-weight="bold" fill="#161616" text-anchor="start" textLength="142.3" lengthAdjust="spacingAndGlyphs">THE TRUTH</text><text x="70.0" y="139.1" font-size="11.2" font-weight="bold" fill="#111" text-anchor="start" textLength="293.7" lengthAdjust="spacingAndGlyphs" stroke="#111" stroke-width="0.5">There was no ghost in Room 13.  It was Jack, the guard.</text><text x="70.0" y="173.2" font-size="10.4" font-weight="normal" fill="#222" text-anchor="start" textLength="302.0" lengthAdjust="spacingAndGlyphs" opacity="0.6" stroke="#222" stroke-width="0.2">Jack didn't want to hurt anyone. He just wanted to make the motel</text><text x="70.0" y="188.1" font-size="10.4" font-weight="normal" fill="#222" text-anchor="start" textLength="282.0" lengthAdjust="spacingAndGlyphs" opacity="0.6" stroke="#222" stroke-width="0.2">seem haunted so more people would come for Halloween. He</text><text x="70.0" y="203.0" font-size="10.4" font-weight="normal" fill="#222" text-anchor="start" textLength="302.0" lengthAdjust="spacingAndGlyphs" opacity="0.6" stroke="#222" stroke-width="0.2">used his old keycard to the basement to play whispers and wore a</text><text x="70.0" y="217.9" font-size="10.4" font-weight="normal" fill="#222" text-anchor="start" textLength="299.0" lengthAdjust="spacingAndGlyphs" opacity="0.6" stroke="#222" stroke-width="0.2">white bedsheet to look like a ghost. He turned off the camera and</text><text x="70.0" y="232.8" font-size="10.4" font-weight="normal" fill="#222" text-anchor="start" textLength="282.0" lengthAdjust="spacingAndGlyphs" opacity="0.6" stroke="#222" stroke-width="0.2">used his flashlight to make the strange lights that Emily and Mr.</text><text x="70.0" y="247.7" font-size="10.4" font-weight="normal" fill="#222" text-anchor="start" textLength="295.0" lengthAdjust="spacingAndGlyphs" opacity="0.6" stroke="#222" stroke-width="0.2">Green saw. The candle wax was all stories were part of his show</text><text x="70.0" y="262.6" font-size="10.4" font-weight="normal" fill="#222" text-anchor="start" textLength="306.0" lengthAdjust="spacingAndGlyphs" opacity="0.6" stroke="#222" stroke-width="0.2">to make the story feel real. But when Mr. Collins saw the "ghost," he</text><text x="70.0" y="277.5" font-size="10.4" font-weight="normal" fill="#222" text-anchor="start" textLength="295.0" lengthAdjust="spacingAndGlyphs" opacity="0.6" stroke="#222" stroke-width="0.2">got scared, ran out, and never came back. Later, police found the</text><text x="70.0" y="292.4" font-size="10.4" font-weight="normal" fill="#222" text-anchor="start" textLength="305.0" lengthAdjust="spacingAndGlyphs" opacity="0.6" stroke="#222" stroke-width="0.2">bedsheet, suitcase, and candle wax on Jack's desk and jacket. Jack</text><text x="70.0" y="307.3" font-size="10.4" font-weight="normal" fill="#222" text-anchor="start" textLength="298.0" lengthAdjust="spacingAndGlyphs" opacity="0.6" stroke="#222" stroke-width="0.2">finally confessed: "People wanted a ghost... I just gave them one."</text><rect x="33.5" y="344.3" width="38" height="3" fill="#222" opacity=".6"/><rect x="621" y="343.5" width="6" height="5" fill="#fff" opacity=".6"/></svg></svg>
<div class="lbl" style="left:550px;top:739.1px">18</div>
<svg class="thumb" style="left:713px;top:623px" width="170" height="99" viewBox="-8 -8.80 680 396" font-family="Liberation Sans"><rect x="-1" y="0" width="668" height="378" fill="none" stroke="#fff" stroke-width="6" opacity=".26" filter="url(#b1)"/><svg x="0" y="0" width="664" height="373.6" viewBox="0 0 664 373.6" overflow="hidden"><rect width="664" height="373.6" fill="#fff"/><rect x="34.6" y="0" width="100.2" height="152" fill="#fdd47b"/><text stroke="#161616" stroke-width="1.1" stroke-linejoin="round" x="71.2" y="71.5" font-size="28" font-weight="bold" fill="#161616" text-anchor="start" textLength="156.4" lengthAdjust="spacingAndGlyphs">QUESTIONS</text><line x1="410.5" y1="84" x2="410.5" y2="308" stroke="#bbb" stroke-width="1" stroke-dasharray="3 3"/><rect x="328.3" y="52.4" width="82.5" height="31" fill="#222"/><text x="369.5" y="70.9" font-size="8" font-weight="bold" fill="#fff" text-anchor="middle">1</text><rect x="411.6" y="139" width="82.5" height="31" fill="#222"/><text x="452.8" y="157.5" font-size="8" font-weight="bold" fill="#fff" text-anchor="middle">2</text><rect x="328.3" y="224" width="82.5" height="31" fill="#222"/><text x="369.5" y="242.5" font-size="8" font-weight="bold" fill="#fff" text-anchor="middle">3</text><rect x="411.6" y="307.8" width="82.5" height="31" fill="#222"/><text x="452.8" y="326.3" font-size="8" font-weight="bold" fill="#fff" text-anchor="middle">4</text><text x="429.6" y="63.2" font-size="11.2" font-weight="bold" fill="#1a1a1a" text-anchor="start" textLength="165.0" lengthAdjust="spacingAndGlyphs" opacity="0.9" stroke="#1a1a1a" stroke-width="0.5">Do you think Jack's plan was</text><text x="429.6" y="79.5" font-size="11.2" font-weight="bold" fill="#1a1a1a" text-anchor="start" textLength="129.0" lengthAdjust="spacingAndGlyphs" opacity="0.9" stroke="#1a1a1a" stroke-width="0.5">clever or foolish? Why?</text><text x="393.0" y="149.3" font-size="11.2" font-weight="bold" fill="#1a1a1a" text-anchor="end" textLength="143.5" lengthAdjust="spacingAndGlyphs" opacity="0.9" stroke="#1a1a1a" stroke-width="0.5">Was this just a Halloween</text><text x="393.0" y="166.1" font-size="11.2" font-weight="bold" fill="#1a1a1a" text-anchor="end" textLength="143.5" lengthAdjust="spacingAndGlyphs" opacity="0.9" stroke="#1a1a1a" stroke-width="0.5">prank or a serious crime?</text><text x="429.6" y="225.2" font-size="11.2" font-weight="bold" fill="#1a1a1a" text-anchor="start" textLength="170.5" lengthAdjust="spacingAndGlyphs" opacity="0.9" stroke="#1a1a1a" stroke-width="0.5">If you were the manager, how</text><text x="429.6" y="241.5" font-size="11.2" font-weight="bold" fill="#1a1a1a" text-anchor="start" textLength="185.7" lengthAdjust="spacingAndGlyphs" opacity="0.9" stroke="#1a1a1a" stroke-width="0.5">would you react after finding out</text><text x="429.6" y="257.9" font-size="11.2" font-weight="bold" fill="#1a1a1a" text-anchor="start" textLength="52.0" lengthAdjust="spacingAndGlyphs" opacity="0.9" stroke="#1a1a1a" stroke-width="0.5">the truth?</text><text x="393.0" y="317.9" font-size="11.2" font-weight="bold" fill="#1a1a1a" text-anchor="end" textLength="156.0" lengthAdjust="spacingAndGlyphs" opacity="0.9" stroke="#1a1a1a" stroke-width="0.5">If the story continued, what</text><text x="393.0" y="335.5" font-size="11.2" font-weight="bold" fill="#1a1a1a" text-anchor="end" textLength="88.0" lengthAdjust="spacingAndGlyphs" opacity="0.9" stroke="#1a1a1a" stroke-width="0.5">would Jack do?</text><rect x="33.5" y="344.3" width="38" height="3" fill="#222" opacity=".6"/><rect x="621" y="343.5" width="6" height="5" fill="#555" opacity=".6"/></svg></svg>
<div class="lbl" style="left:768px;top:739.1px">19</div>
<svg class="thumb" style="left:931px;top:623px" width="170" height="99" viewBox="-8 -8.80 680 396" font-family="Liberation Sans"><rect x="-1" y="0" width="668" height="378" fill="none" stroke="#fff" stroke-width="6" opacity=".26" filter="url(#b1)"/><svg x="0" y="0" width="664" height="373.6" viewBox="0 0 664 373.6" overflow="hidden"><rect width="664" height="373.6" fill="#fff"/><svg x="0" y="0" width="276.5" height="373.6" viewBox="0 0 276.5 373.6" overflow="hidden"><rect width="276.5" height="373.6" fill="#0b1a22"/><g filter="url(#bg1)"><rect x="0.0" y="0.0" width="276.5" height="373.6" fill="url(#g57)" /><rect x="0.0" y="0.0" width="276.5" height="373.6" fill="url(#g58)" /><g filter="url(#b16)" ><ellipse cx="112.0" cy="190.0" rx="62.0" ry="85.0" fill="#5a4418" opacity=".7"/></g><g filter="url(#b8)" ><polygon points="135.0,108.0 146.0,114.0 120.0,215.0 48.0,190.0" fill="#b08a2e" opacity=".45"/></g><g filter="url(#b8)" ><polygon points="115.0,125.0 124.0,131.0 100.0,190.0 62.0,172.0" fill="#b8922f" opacity=".35"/></g><g filter="url(#b2)" ><ellipse cx="134.0" cy="110.0" rx="8.0" ry="5.0" fill="#f2d278" /></g><g filter="url(#b2)" ><ellipse cx="114.0" cy="128.0" rx="7.0" ry="4.5" fill="#e2bc58" /></g><line x1="176.8" y1="99.0" x2="176.8" y2="266.0" stroke="#070b0d" stroke-width="2.5" /><line x1="135.0" y1="103.0" x2="176.8" y2="100.0" stroke="#070b0d" stroke-width="2.2" /><line x1="141.6" y1="132.0" x2="141.6" y2="220.0" stroke="#1a1a14" stroke-width="1.8" /><g filter="url(#b2)" ><ellipse cx="149.5" cy="30.8" rx="7.0" ry="7.0" fill="#7a9aaa" opacity=".5"/></g><ellipse cx="149.5" cy="30.8" rx="3.6" ry="3.6" fill="#f4f8fa" /><g filter="url(#b2)" ><ellipse cx="209.8" cy="159.3" rx="9.0" ry="9.0" fill="#7a8a90" opacity=".6"/></g><ellipse cx="209.8" cy="159.3" rx="3.4" ry="3.4" fill="#f0f0ea" /><g filter="url(#b2)" ><ellipse cx="104.0" cy="288.0" rx="9.0" ry="11.0" fill="#07090a" opacity=".9"/></g></g></svg><rect x="224.2" y="0" width="104.1" height="180" fill="#fdd47b"/><text x="356.4" y="161.7" font-size="20" font-weight="bold" fill="#1c1c1c" text-anchor="start" textLength="238.0" lengthAdjust="spacingAndGlyphs" font-style="italic" opacity="0.92">"It's easy to create fear</text><text x="356.4" y="193.7" font-size="20" font-weight="bold" fill="#1c1c1c" text-anchor="start" textLength="256.5" lengthAdjust="spacingAndGlyphs" font-style="italic" opacity="0.92">when people are already</text><text x="356.4" y="224.7" font-size="20" font-weight="bold" fill="#1c1c1c" text-anchor="start" textLength="145.0" lengthAdjust="spacingAndGlyphs" font-style="italic" opacity="0.92">looking for it."</text><rect x="33.5" y="344.3" width="38" height="3" fill="#fff" opacity=".6"/><rect x="621" y="343.5" width="6" height="5" fill="#555" opacity=".6"/></svg></svg>
<div class="lbl" style="left:986px;top:739.1px">20</div>
</div>
<svg style="position:absolute;left:758.1px;top:195.7px;filter:drop-shadow(0 .8px 1px rgba(0,0,0,.3))" width="16" height="22" viewBox="-3 -3 16 22"><path d="M0 0 L0 11.200 L2.500 9 L4.700 14.200 L6.800 13.300 L4.700 8.400 L8 8.400 Z" fill="#000" stroke="#fff" stroke-width="1.900" stroke-linejoin="round" paint-order="stroke"/></svg>

</body></html>
